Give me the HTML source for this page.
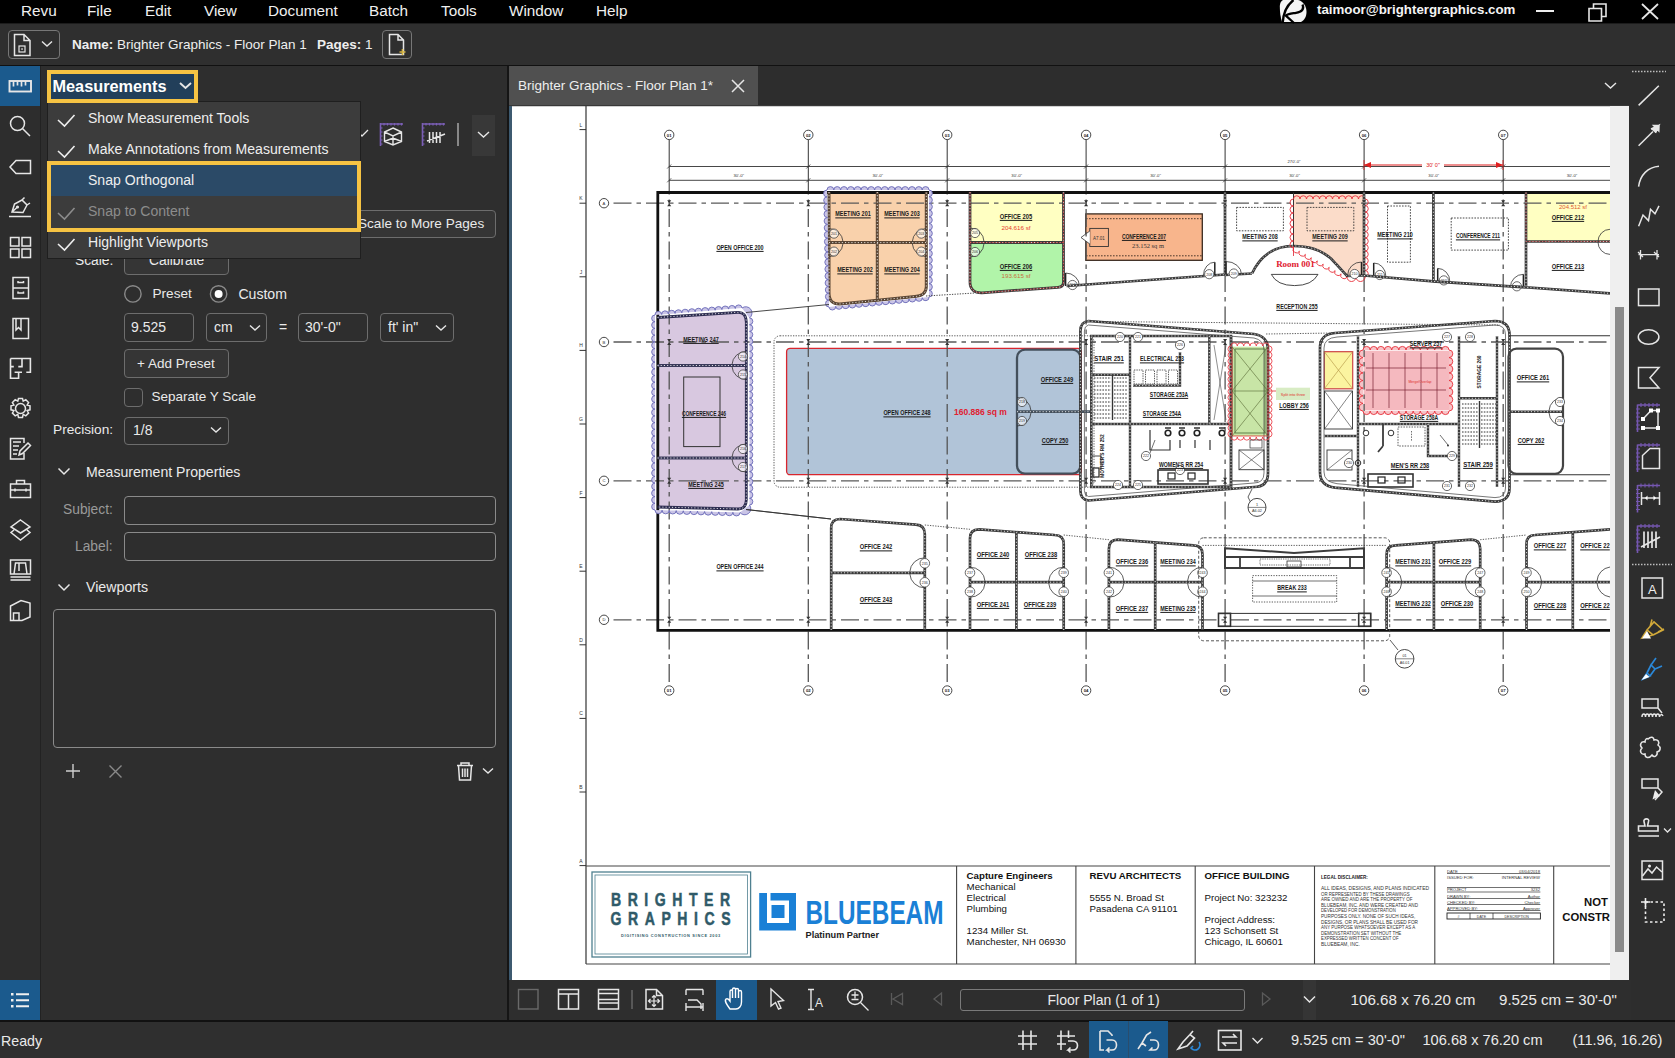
<!DOCTYPE html>
<html><head><meta charset="utf-8">
<style>
*{margin:0;padding:0;box-sizing:border-box}
html,body{width:1675px;height:1058px;overflow:hidden;background:#2b2b2b;font-family:"Liberation Sans",sans-serif;color:#e8e8e8}
.a{position:absolute}
.t{position:absolute;white-space:nowrap;line-height:1}
svg{position:absolute;overflow:visible}
.ic{fill:none;stroke:#e6e6e6;stroke-width:1.5}
</style></head><body>
<!-- menu bar -->
<div class="a" style="left:0;top:0;width:1675px;height:23px;background:#000"></div>
<div class="t" style="left:21px;top:3px;font-size:15.3px;color:#f0f0f0">Revu</div>
<div class="t" style="left:87px;top:3px;font-size:15.3px;color:#f0f0f0">File</div>
<div class="t" style="left:145px;top:3px;font-size:15.3px;color:#f0f0f0">Edit</div>
<div class="t" style="left:204px;top:3px;font-size:15.3px;color:#f0f0f0">View</div>
<div class="t" style="left:268px;top:3px;font-size:15.3px;color:#f0f0f0">Document</div>
<div class="t" style="left:369px;top:3px;font-size:15.3px;color:#f0f0f0">Batch</div>
<div class="t" style="left:441px;top:3px;font-size:15.3px;color:#f0f0f0">Tools</div>
<div class="t" style="left:509px;top:3px;font-size:15.3px;color:#f0f0f0">Window</div>
<div class="t" style="left:596px;top:3px;font-size:15.3px;color:#f0f0f0">Help</div>

<!-- toolbar row -->
<div class="a" style="left:0;top:23px;width:1675px;height:42px;background:#2f2f2f"></div><div class="a" style="left:0;top:23px;width:1675px;height:1px;background:#1c1c1c"></div>
<div class="a" style="left:0;top:65px;width:1675px;height:1px;background:#111"></div>
<!-- top right -->
<svg style="left:1275px;top:0" width="35" height="23" viewBox="1275 0 35 23">
<path d="M1283 0 H1298 C1303 1 1306.5 6 1306.5 12 C1306.5 17 1304 20.5 1301 22 H1282 C1280.5 17 1279.8 12 1279.8 6 C1280 3 1281 1 1283 0 Z" fill="#f4f4f4"/>
<path d="M1282.7 23 C1283 14 1286 6 1293.5 0" fill="none" stroke="#000" stroke-width="2.3"/>
<path d="M1302.5 4.5 C1304.5 9 1302 12 1296 12.8 C1291 13.5 1287.5 13.6 1285.8 15.6 L1294 23" fill="none" stroke="#000" stroke-width="2.3"/>
</svg>
<div class="t" style="left:1317px;top:3px;font-size:13.3px;font-weight:bold;color:#f4f4f4">taimoor@brightergraphics.com</div>
<div class="a" style="left:1536px;top:10px;width:18px;height:1.5px;background:#eee"></div>
<svg style="left:1588px;top:2px" width="20" height="20" viewBox="0 0 20 20"><path d="M1 6.5 H13.5 V19 H1 Z M5.5 6.5 V2 H18 V14.5 H13.5" class="ic" style="stroke-width:1.6"/></svg>
<svg style="left:1641px;top:3px" width="18" height="17" viewBox="0 0 18 17"><path d="M1 1 L17 16 M17 1 L1 16" class="ic" style="stroke-width:1.8"/></svg>

<!-- doc button -->
<div class="a" style="left:8px;top:30px;width:52px;height:29px;border:1.5px solid #777;border-radius:4px"></div>
<svg style="left:13px;top:33px" width="20" height="24" viewBox="0 0 20 24"><path d="M1.5 1.5 H11 L17 7.5 V22.5 H1.5 Z M11 1.5 V7.5 H17" class="ic"/><rect x="6" y="13" width="6" height="6" class="ic" style="stroke-width:1.2"/><rect x="8.3" y="15.3" width="1.5" height="1.5" fill="#e6e6e6"/></svg>
<svg style="left:41px;top:40px" width="12" height="8" viewBox="0 0 12 8"><path d="M1 1.5 L6 6 L11 1.5" class="ic" style="stroke-width:1.4"/></svg>
<div class="t" style="left:72px;top:38px;font-size:13.5px;color:#eee"><b>Name:</b> Brighter Graphics - Floor Plan 1</div>
<div class="t" style="left:317px;top:38px;font-size:13.5px;color:#eee"><b>Pages:</b> 1</div>
<div class="a" style="left:382px;top:30px;width:30px;height:29px;border:1.5px solid #777;border-radius:4px"></div>
<svg style="left:388px;top:33px" width="20" height="24" viewBox="0 0 20 24"><path d="M1.5 1.5 H10 L15.5 7 V21.5 H1.5 Z M10 1.5 V7 H15.5" class="ic"/><path d="M14.5 16 V22 M11.5 19 H17.5" stroke="#d4b340" stroke-width="1.6"/></svg>

<!-- left icon strip -->
<div class="a" style="left:0;top:66px;width:40px;height:954px;background:#2d2d2d"></div>
<div class="a" style="left:40px;top:66px;width:1px;height:954px;background:#222"></div>
<div class="a" style="left:0;top:66px;width:40px;height:40px;background:#1b5a8d"></div>
<div class="a" style="left:0;top:980px;width:40px;height:40px;background:#1b5a8d"></div>


<svg style="left:0;top:66px" width="40" height="560" viewBox="0 66 40 560">
<g class="ic">
<!-- ruler -->
<rect x="9.5" y="81" width="21.5" height="10.5" style="stroke-width:1.9"/><path d="M13.5 81 V86.5 M17.5 81 V85.5 M21.5 81 V86.5 M25.5 81 V85.5" style="stroke-width:1.7"/>
<!-- search -->
<circle cx="17.5" cy="123.5" r="7"/><path d="M22.5 128.5 L30 136"/>
<!-- tag -->
<path d="M10 167 L16 160.5 H30.5 V173.5 H16 Z"/>
<!-- pen -->
<path d="M9 216.5 H31 M12 212 L14.5 204 L22 200 L27 205 L23 212.5 Z M22 200 L24.5 197.5 M27 205 L30 203 M12 212 L17.5 207"/><circle cx="17.5" cy="207" r="0.8" fill="#e6e6e6"/>
<!-- grid -->
<rect x="10.5" y="237.5" width="8.5" height="8.5"/><rect x="22" y="237.5" width="8.5" height="8.5"/><rect x="10.5" y="249" width="8.5" height="8.5"/><rect x="22" y="249" width="8.5" height="8.5"/>
<!-- cabinet -->
<rect x="13" y="277.5" width="15.5" height="21"/><path d="M13 288 H28.5 M18 281 V282.5 H23.5 V281 M18 291.5 V293 H23.5 V291.5"/>
<!-- bookmark -->
<rect x="13" y="318.5" width="15.5" height="20"/><path d="M16 318.5 V330 L18.5 327.5 L21 330 V318.5"/>
<!-- floorplan -->
<path d="M10.5 358.5 H30.4 V372.3 H26.3 M10.5 358.5 V378.2 H18.6 V372.3 M14.6 372.3 H22 M22 358.5 V366.6 H18.3 M10.5 366.6 H13.8" style="stroke-width:1.6"/>
<!-- gear -->
<circle cx="20.5" cy="408.5" r="5"/>
<path d="M18.5 398.5 H22.5 L23.2 401.2 L25.8 399.7 L28.6 402.5 L27.1 405.1 L30 405.8 V409.8 L27.1 410.5 L28.6 413.1 L25.8 415.9 L23.2 414.4 L22.5 417.5 H18.5 L17.8 414.4 L15.2 415.9 L12.4 413.1 L13.9 410.5 L11 409.8 V405.8 L13.9 405.1 L12.4 402.5 L15.2 399.7 L17.8 401.2 Z"/>
<!-- form -->
<path d="M24 453 V459 H10.5 V438.5 H24 V443"/><path d="M13 442 H21 M13 446 H19 M13 450 H18 M13 454 H17"/><path d="M19 455 L20 451 L28 443 L30.5 445.5 L22.5 453.5 Z"/>
<!-- toolbox -->
<rect x="10.5" y="484" width="20" height="13.5"/><path d="M16.5 484 V480.5 H24.5 V484 M10.5 490 H30.5 M15 488.5 V491.5 M26 488.5 V491.5"/>
<!-- layers -->
<path d="M20.5 520 L30 527 L20.5 533 L11 527 Z M14 530 L11 532.5 L20.5 540 L30 532.5 L27 530"/>
<!-- scanner -->
<path d="M10.5 574 V560 H30.5 V574 Z M14 574 L15.5 563 H25.5 L27 574 M19 563 V571 M10.5 577 H30.5 M10.5 580 H30.5"/>
<!-- house -->
<path d="M10.5 606 L21 600.5 L30 603 V617 L22 620.5 H10.5 Z M13.5 620.5 V613 H19 V620.5"/>
</g>
</svg>
<svg style="left:0;top:980px" width="40" height="40" viewBox="0 0 40 40">
<g fill="#f0f0f0"><rect x="11" y="13" width="2.5" height="2.5"/><rect x="11" y="19" width="2.5" height="2.5"/><rect x="11" y="25" width="2.5" height="2.5"/></g>
<path d="M16 14.3 H29 M16 20.3 H29 M16 26.3 H29" stroke="#f0f0f0" stroke-width="2"/>
</svg>

<!-- left panel -->
<div class="a" style="left:41px;top:66px;width:466px;height:954px;background:#2e2e2e"></div>
<div class="a" style="left:507px;top:66px;width:2px;height:954px;background:#151515"></div>

<div class="a" style="left:472px;top:115px;width:23px;height:41px;background:#383838"></div>
<svg style="left:477px;top:131px" width="13" height="8" viewBox="0 0 13 8"><path d="M1 1 L6.5 6 L12 1" class="ic" style="stroke-width:1.4"/></svg>
<div class="a" style="left:457px;top:123px;width:2px;height:23px;background:#888"></div>
<svg style="left:358px;top:128px" width="12" height="10" viewBox="0 0 12 10"><path d="M1 5 L4 8 L10 2" class="ic" style="stroke-width:1.3"/></svg>
<svg style="left:379px;top:122px" width="26" height="25" viewBox="0 0 26 25">
<path d="M1.5 1 V24 M1.5 2 H24" stroke="#7b5fb5" stroke-width="1.6" fill="none"/>
<path d="M5 1 V3.5 M8.5 1 V3.5 M12 1 V3.5 M15.5 1 V3.5 M19 1 V3.5 M22.5 1 V3.5 M1 6 H3.5 M1 10 H3.5 M1 14 H3.5 M1 18 H3.5 M1 22 H3.5" stroke="#7b5fb5" stroke-width="1.2"/>
<path d="M14 6 L22.5 10 V19.5 L14 23 L5.5 19.5 V10 Z M5.5 10 L14 14 L22.5 10 M14 14 V23 M5.5 19.5 L14 16 L22.5 19.5" class="ic" style="stroke-width:1.4"/>
</svg>
<svg style="left:421px;top:122px" width="26" height="25" viewBox="0 0 26 25">
<path d="M1.5 1 V24 M1.5 2 H24" stroke="#7b5fb5" stroke-width="1.6" fill="none"/>
<path d="M5 1 V3.5 M8.5 1 V3.5 M12 1 V3.5 M15.5 1 V3.5 M19 1 V3.5 M22.5 1 V3.5 M1 6 H3.5 M1 10 H3.5 M1 14 H3.5 M1 18 H3.5 M1 22 H3.5" stroke="#7b5fb5" stroke-width="1.2"/>
<path d="M8.5 10 V21 M12 10 V21 M15.5 10 V21 M19 10 V21 M6 19 L24 12" class="ic" style="stroke-width:1.5"/>
</svg>
<div class="a" style="left:300px;top:210px;width:196px;height:28px;border:1.3px solid #6d6d6d;border-radius:4px;background:#353535"></div>
<div class="t" style="left:358px;top:217.0px;font-size:13.6px;color:#eaeaea;">Scale to More Pages</div>
<div class="t" style="left:75px;top:253.9px;font-size:13.8px;color:#eaeaea;">Scale:</div>
<div class="a" style="left:124px;top:246px;width:105px;height:29px;border:1.3px solid #6d6d6d;border-radius:4px;background:#353535"></div>
<div class="t" style="left:149px;top:253.9px;font-size:13.8px;color:#eaeaea;">Calibrate</div>
<svg style="left:120px;top:281px" width="110" height="26" viewBox="120 281 110 26"><circle cx="132.9" cy="293.9" r="8.2" fill="none" stroke="#8a8a8a" stroke-width="1.4"/><circle cx="218.6" cy="293.9" r="8.2" fill="none" stroke="#8a8a8a" stroke-width="1.4"/><circle cx="218.6" cy="293.9" r="4" fill="#fff"/></svg>
<div class="t" style="left:152.5px;top:286.9px;font-size:13.6px;color:#eaeaea;">Preset</div>
<div class="t" style="left:238.4px;top:286.5px;font-size:14.1px;color:#eaeaea;">Custom</div>
<div class="a" style="left:124px;top:313px;width:70px;height:29px;border:1.3px solid #6d6d6d;border-radius:4px;background:#2e2e2e"></div>
<div class="t" style="left:131px;top:320.1px;font-size:14px;color:#eaeaea;">9.525</div>
<div class="a" style="left:206px;top:313px;width:61px;height:29px;border:1.3px solid #6d6d6d;border-radius:4px;background:#2e2e2e"></div>
<div class="t" style="left:214px;top:320.1px;font-size:14px;color:#eaeaea;">cm</div>
<svg style="left:249px;top:324px" width="12" height="8" viewBox="0 0 12 8"><path d="M1 1.5 L6 6 L11 1.5" class="ic" style="stroke-width:1.4"/></svg>
<div class="t" style="left:279px;top:320.1px;font-size:14px;color:#eaeaea;">=</div>
<div class="a" style="left:298px;top:313px;width:70px;height:29px;border:1.3px solid #6d6d6d;border-radius:4px;background:#2e2e2e"></div>
<div class="t" style="left:305px;top:320.1px;font-size:14px;color:#eaeaea;">30'-0"</div>
<div class="a" style="left:380px;top:313px;width:74px;height:29px;border:1.3px solid #6d6d6d;border-radius:4px;background:#2e2e2e"></div>
<div class="t" style="left:388px;top:320.1px;font-size:14px;color:#eaeaea;">ft' in"</div>
<svg style="left:435px;top:324px" width="12" height="8" viewBox="0 0 12 8"><path d="M1 1.5 L6 6 L11 1.5" class="ic" style="stroke-width:1.4"/></svg>
<div class="a" style="left:124px;top:349px;width:105px;height:29px;border:1.3px solid #6d6d6d;border-radius:4px;background:#353535"></div>
<div class="t" style="left:137px;top:356.6px;font-size:13.5px;color:#eaeaea;">+ Add Preset</div>
<div class="a" style="left:124px;top:388px;width:19px;height:19px;border:1.3px solid #6d6d6d;border-radius:4px;background:#2e2e2e"></div>
<div class="t" style="left:151.5px;top:390.1px;font-size:13.5px;color:#eaeaea;">Separate Y Scale</div>
<div class="t" style="left:53px;top:423.4px;font-size:13.7px;color:#eaeaea;">Precision:</div>
<div class="a" style="left:124px;top:417px;width:105px;height:28px;border:1.3px solid #6d6d6d;border-radius:4px;background:#2e2e2e"></div>
<div class="t" style="left:133px;top:423.1px;font-size:14px;color:#eaeaea;">1/8</div>
<svg style="left:210px;top:426px" width="12" height="8" viewBox="0 0 12 8"><path d="M1 1.5 L6 6 L11 1.5" class="ic" style="stroke-width:1.4"/></svg>
<svg style="left:57px;top:467px" width="14" height="9" viewBox="0 0 14 9"><path d="M1.5 1.5 L7 7 L12.5 1.5" class="ic" style="stroke-width:1.5"/></svg>
<div class="t" style="left:86px;top:464.6px;font-size:14.1px;color:#eaeaea;">Measurement Properties</div>
<div class="t" style="left:63px;top:503.3px;font-size:13.8px;color:#9a9a9a;">Subject:</div>
<div class="a" style="left:124px;top:496px;width:372px;height:29px;border:1.3px solid #8a8a8a;border-radius:4px;background:#2e2e2e"></div>
<div class="t" style="left:75px;top:539.8px;font-size:13.8px;color:#9a9a9a;">Label:</div>
<div class="a" style="left:124px;top:532px;width:372px;height:29px;border:1.3px solid #8a8a8a;border-radius:4px;background:#2e2e2e"></div>
<svg style="left:57px;top:583px" width="14" height="9" viewBox="0 0 14 9"><path d="M1.5 1.5 L7 7 L12.5 1.5" class="ic" style="stroke-width:1.5"/></svg>
<div class="t" style="left:86px;top:580.0px;font-size:14.2px;color:#eaeaea;">Viewports</div>
<div class="a" style="left:53px;top:609px;width:443px;height:139px;border:1.3px solid #8a8a8a;border-radius:4px;background:#2e2e2e"></div>
<svg style="left:60px;top:760px" width="440" height="24" viewBox="60 760 440 24"><path d="M73 764 V778 M66 771 H80" stroke="#cfcfcf" stroke-width="1.4"/><path d="M109.5 765.5 L121.5 777.5 M121.5 765.5 L109.5 777.5" stroke="#8a8a8a" stroke-width="1.4"/><path d="M457 765.5 H473 M461 765.5 V763 H469 V765.5 M458.5 765.5 L459.5 780 H470.5 L471.5 765.5 M462.5 768.5 V777 M465 768.5 V777 M467.5 768.5 V777" class="ic" style="stroke-width:1.5"/><path d="M483 768.5 L488 773 L493 768.5" class="ic" style="stroke-width:1.4"/></svg>
<div class="a" style="left:47px;top:101px;width:314px;height:158px;background:#3c3c3c;border:1px solid #1f1f1f"></div>
<div class="a" style="left:47px;top:161px;width:314px;height:71px;border:4px solid #f6c343"></div>
<div class="a" style="left:51px;top:165px;width:306px;height:31px;background:#2b4a67"></div>
<div class="t" style="left:88px;top:110.7px;font-size:14.05px;color:#eee;">Show Measurement Tools</div>
<svg style="left:56px;top:113.6px" width="20" height="14" viewBox="0 0 20 14"><path d="M2 6 L8.5 12 L18.5 1" fill="none" stroke="#eee" stroke-width="1.6"/></svg>
<div class="t" style="left:88px;top:141.7px;font-size:14.05px;color:#eee;">Make Annotations from Measurements</div>
<svg style="left:56px;top:144.6px" width="20" height="14" viewBox="0 0 20 14"><path d="M2 6 L8.5 12 L18.5 1" fill="none" stroke="#eee" stroke-width="1.6"/></svg>
<div class="t" style="left:88px;top:172.7px;font-size:14.05px;color:#eee;">Snap Orthogonal</div>
<div class="t" style="left:88px;top:203.7px;font-size:14.05px;color:#8c8c8c;">Snap to Content</div>
<svg style="left:56px;top:206.6px" width="20" height="14" viewBox="0 0 20 14"><path d="M2 6 L8.5 12 L18.5 1" fill="none" stroke="#8c8c8c" stroke-width="1.6"/></svg>
<div class="t" style="left:88px;top:234.7px;font-size:14.05px;color:#eee;">Highlight Viewports</div>
<svg style="left:56px;top:237.6px" width="20" height="14" viewBox="0 0 20 14"><path d="M2 6 L8.5 12 L18.5 1" fill="none" stroke="#eee" stroke-width="1.6"/></svg>
<div class="a" style="left:47px;top:70px;width:151px;height:33px;border:4px solid #f6c343;background:#223f5a"></div>
<div class="t" style="left:52.5px;top:77.7px;font-size:16.3px;color:#fff;font-weight:bold">Measurements</div>
<svg style="left:179px;top:82px" width="13" height="8" viewBox="0 0 13 8"><path d="M1 1 L6.5 6 L12 1" class="ic" style="stroke-width:1.9"/></svg>

<!-- tab bar / doc area -->
<div class="a" style="left:509px;top:66px;width:1122px;height:40px;background:#2d2d2d"></div>
<div class="a" style="left:509px;top:66px;width:249px;height:40px;background:#505050"></div>
<div class="a" style="left:509px;top:105px;width:1120px;height:1px;background:#383838"></div>
<div class="t" style="left:518px;top:79px;font-size:13.5px;color:#eee">Brighter Graphics - Floor Plan 1*</div>
<svg style="left:731px;top:79px" width="14" height="14" viewBox="0 0 14 14"><path d="M1 1 L13 13 M13 1 L1 13" class="ic" style="stroke-width:1.5"/></svg>
<svg style="left:1604px;top:82px" width="13" height="8" viewBox="0 0 13 8"><path d="M1 1 L6.5 6 L12 1" class="ic" style="stroke-width:1.4"/></svg>
<div class="a" style="left:509px;top:106px;width:3px;height:874px;background:#3d5a70"></div>
<div class="a" id="page" style="left:512px;top:106px;width:1098px;height:874px;background:#fff;overflow:hidden"></div>
<!--PLAN--><svg style="left:512px;top:106px" width="1098" height="874" viewBox="512 106 1098 874"><defs><clipPath id="pc"><rect x="512" y="106" width="1098" height="874"/></clipPath></defs><g clip-path="url(#pc)">
<path d="M512 106.5 H1610" stroke="#d0d0d0" stroke-width="1"/>
<path d="M586 106 V964" stroke="#333" stroke-width="1.2"/>
<path d="M579.5 129.6 H586" stroke="#333" stroke-width="1"/>
<text x="581" y="126.6" font-family="Liberation Sans" font-size="5" fill="#333" text-anchor="middle">L</text>
<path d="M579.5 203.2 H586" stroke="#333" stroke-width="1"/>
<text x="581" y="200.2" font-family="Liberation Sans" font-size="5" fill="#333" text-anchor="middle">K</text>
<path d="M579.5 276.8 H586" stroke="#333" stroke-width="1"/>
<text x="581" y="273.8" font-family="Liberation Sans" font-size="5" fill="#333" text-anchor="middle">J</text>
<path d="M579.5 350.4 H586" stroke="#333" stroke-width="1"/>
<text x="581" y="347.4" font-family="Liberation Sans" font-size="5" fill="#333" text-anchor="middle">H</text>
<path d="M579.5 424.0 H586" stroke="#333" stroke-width="1"/>
<text x="581" y="421.0" font-family="Liberation Sans" font-size="5" fill="#333" text-anchor="middle">G</text>
<path d="M579.5 497.6 H586" stroke="#333" stroke-width="1"/>
<text x="581" y="494.6" font-family="Liberation Sans" font-size="5" fill="#333" text-anchor="middle">F</text>
<path d="M579.5 571.2 H586" stroke="#333" stroke-width="1"/>
<text x="581" y="568.2" font-family="Liberation Sans" font-size="5" fill="#333" text-anchor="middle">E</text>
<path d="M579.5 644.8 H586" stroke="#333" stroke-width="1"/>
<text x="581" y="641.8" font-family="Liberation Sans" font-size="5" fill="#333" text-anchor="middle">D</text>
<path d="M579.5 718.4 H586" stroke="#333" stroke-width="1"/>
<text x="581" y="715.4" font-family="Liberation Sans" font-size="5" fill="#333" text-anchor="middle">C</text>
<path d="M579.5 792.0 H586" stroke="#333" stroke-width="1"/>
<text x="581" y="789.0" font-family="Liberation Sans" font-size="5" fill="#333" text-anchor="middle">B</text>
<path d="M579.5 865.6 H586" stroke="#333" stroke-width="1"/>
<text x="581" y="862.6" font-family="Liberation Sans" font-size="5" fill="#333" text-anchor="middle">A</text>
<path d="M657.5 317.5 L738 312.3 Q746 312 746.3 322 L746.3 500 Q746 509 738 509 L657.5 507 Z" fill="#d8c8e0"/>
<path d="M829 191.5 H926.3 V287 Q926 295.7 915 296.5 L840 304 Q829 304.5 829 293 Z" fill="#f9d1ab"/>
<rect x="970" y="192.5" width="93.5" height="50" fill="#ffffc2"/>
<path d="M970 242.5 H1063.5 V282 Q1063.5 287 1058 287.3 L982 292.8 Q970 293 970 282 Z" fill="#b1f4a9"/>
<rect x="1085.8" y="213.9" width="116.5" height="46.4" fill="#f8b58c" stroke="#3a2a20" stroke-width="1.3"/>
<path d="M1086 218.7 H1202 M1086 255.8 H1202" stroke="#3a2a20" stroke-width="0.9" stroke-dasharray="1.6 1.4"/>
<rect x="1089.8" y="228.4" width="18.6" height="18.1" fill="none" stroke="#333" stroke-width="0.9"/>
<path d="M1089.8 231 L1081 237.5 L1089.8 244" fill="#fff" stroke="#333" stroke-width="0.8"/>
<text x="1099" y="239.5" font-family="Liberation Sans" font-size="4.5" fill="#333" text-anchor="middle">A7.01</text>
<path d="M1293.5 192.5 H1364 V276 L1347 276 Q1343 268 1336 263 Q1315 246 1293.5 246 Z" fill="#fbdcc9"/>
<rect x="1526" y="192.5" width="84" height="49" fill="#ffffc2"/>
<rect x="786.6" y="348.3" width="294.7" height="126.4" rx="3.5" fill="#b1c4d8" stroke="#d8262e" stroke-width="1.3"/>
<rect x="1017" y="349.7" width="63.4" height="124" rx="8" fill="#b1c4d8" stroke="#44505c" stroke-width="2.3"/>
<rect x="1232" y="346.7" width="36" height="89.3" fill="#c8e5a6"/>
<rect x="1324.3" y="351.7" width="28.4" height="37.1" fill="#fbf4a0" stroke="#c44" stroke-width="1.2"/>
<rect x="1363.6" y="350.7" width="85.4" height="59.6" fill="#f5b9bf"/>
<rect x="1276" y="387.7" width="34" height="12.3" fill="#d8ecc4"/>
<path d="M669.2 139.6 V192" stroke="#333" stroke-width="1"/>
<path d="M669.2 192 V685.8" stroke="#555" stroke-width="1.3" stroke-dasharray="18 5 4.5 5" stroke-dashoffset="15.4"/>
<circle cx="669.2" cy="134.9" r="4.7" fill="#fff" stroke="#333" stroke-width="0.9"/>
<circle cx="669.2" cy="690.5" r="4.7" fill="#fff" stroke="#333" stroke-width="0.9"/>
<text x="669.2" y="136.6" font-family="Liberation Sans" font-size="4.3" font-weight="bold" fill="#222" text-anchor="middle">01</text>
<text x="669.2" y="692.2" font-family="Liberation Sans" font-size="4.3" font-weight="bold" fill="#222" text-anchor="middle">01</text>
<path d="M667.2 200.2 H671.2 L669.2 203.2 L671.2 206.2 H667.2 L669.2 203.2 Z" fill="#333"/>
<path d="M667.2 339.0 H671.2 L669.2 342.0 L671.2 345.0 H667.2 L669.2 342.0 Z" fill="#333"/>
<path d="M667.2 477.8 H671.2 L669.2 480.8 L671.2 483.8 H667.2 L669.2 480.8 Z" fill="#333"/>
<path d="M667.2 616.8 H671.2 L669.2 619.8 L671.2 622.8 H667.2 L669.2 619.8 Z" fill="#333"/>
<path d="M808.3 139.6 V192" stroke="#333" stroke-width="1"/>
<path d="M808.3 192 V685.8" stroke="#555" stroke-width="1.3" stroke-dasharray="18 5 4.5 5" stroke-dashoffset="15.4"/>
<circle cx="808.3" cy="134.9" r="4.7" fill="#fff" stroke="#333" stroke-width="0.9"/>
<circle cx="808.3" cy="690.5" r="4.7" fill="#fff" stroke="#333" stroke-width="0.9"/>
<text x="808.3" y="136.6" font-family="Liberation Sans" font-size="4.3" font-weight="bold" fill="#222" text-anchor="middle">02</text>
<text x="808.3" y="692.2" font-family="Liberation Sans" font-size="4.3" font-weight="bold" fill="#222" text-anchor="middle">02</text>
<path d="M806.3 200.2 H810.3 L808.3 203.2 L810.3 206.2 H806.3 L808.3 203.2 Z" fill="#333"/>
<path d="M806.3 339.0 H810.3 L808.3 342.0 L810.3 345.0 H806.3 L808.3 342.0 Z" fill="#333"/>
<path d="M806.3 477.8 H810.3 L808.3 480.8 L810.3 483.8 H806.3 L808.3 480.8 Z" fill="#333"/>
<path d="M806.3 616.8 H810.3 L808.3 619.8 L810.3 622.8 H806.3 L808.3 619.8 Z" fill="#333"/>
<path d="M947.2 139.6 V192" stroke="#333" stroke-width="1"/>
<path d="M947.2 192 V685.8" stroke="#555" stroke-width="1.3" stroke-dasharray="18 5 4.5 5" stroke-dashoffset="15.4"/>
<circle cx="947.2" cy="134.9" r="4.7" fill="#fff" stroke="#333" stroke-width="0.9"/>
<circle cx="947.2" cy="690.5" r="4.7" fill="#fff" stroke="#333" stroke-width="0.9"/>
<text x="947.2" y="136.6" font-family="Liberation Sans" font-size="4.3" font-weight="bold" fill="#222" text-anchor="middle">03</text>
<text x="947.2" y="692.2" font-family="Liberation Sans" font-size="4.3" font-weight="bold" fill="#222" text-anchor="middle">03</text>
<path d="M945.2 200.2 H949.2 L947.2 203.2 L949.2 206.2 H945.2 L947.2 203.2 Z" fill="#333"/>
<path d="M945.2 339.0 H949.2 L947.2 342.0 L949.2 345.0 H945.2 L947.2 342.0 Z" fill="#333"/>
<path d="M945.2 477.8 H949.2 L947.2 480.8 L949.2 483.8 H945.2 L947.2 480.8 Z" fill="#333"/>
<path d="M945.2 616.8 H949.2 L947.2 619.8 L949.2 622.8 H945.2 L947.2 619.8 Z" fill="#333"/>
<path d="M1086.1 139.6 V192" stroke="#333" stroke-width="1"/>
<path d="M1086.1 192 V685.8" stroke="#555" stroke-width="1.3" stroke-dasharray="18 5 4.5 5" stroke-dashoffset="15.4"/>
<circle cx="1086.1" cy="134.9" r="4.7" fill="#fff" stroke="#333" stroke-width="0.9"/>
<circle cx="1086.1" cy="690.5" r="4.7" fill="#fff" stroke="#333" stroke-width="0.9"/>
<text x="1086.1" y="136.6" font-family="Liberation Sans" font-size="4.3" font-weight="bold" fill="#222" text-anchor="middle">04</text>
<text x="1086.1" y="692.2" font-family="Liberation Sans" font-size="4.3" font-weight="bold" fill="#222" text-anchor="middle">04</text>
<path d="M1084.1 200.2 H1088.1 L1086.1 203.2 L1088.1 206.2 H1084.1 L1086.1 203.2 Z" fill="#333"/>
<path d="M1084.1 339.0 H1088.1 L1086.1 342.0 L1088.1 345.0 H1084.1 L1086.1 342.0 Z" fill="#333"/>
<path d="M1084.1 477.8 H1088.1 L1086.1 480.8 L1088.1 483.8 H1084.1 L1086.1 480.8 Z" fill="#333"/>
<path d="M1084.1 616.8 H1088.1 L1086.1 619.8 L1088.1 622.8 H1084.1 L1086.1 619.8 Z" fill="#333"/>
<path d="M1225.1 139.6 V192" stroke="#333" stroke-width="1"/>
<path d="M1225.1 192 V685.8" stroke="#555" stroke-width="1.3" stroke-dasharray="18 5 4.5 5" stroke-dashoffset="15.4"/>
<circle cx="1225.1" cy="134.9" r="4.7" fill="#fff" stroke="#333" stroke-width="0.9"/>
<circle cx="1225.1" cy="690.5" r="4.7" fill="#fff" stroke="#333" stroke-width="0.9"/>
<text x="1225.1" y="136.6" font-family="Liberation Sans" font-size="4.3" font-weight="bold" fill="#222" text-anchor="middle">05</text>
<text x="1225.1" y="692.2" font-family="Liberation Sans" font-size="4.3" font-weight="bold" fill="#222" text-anchor="middle">05</text>
<path d="M1223.1 200.2 H1227.1 L1225.1 203.2 L1227.1 206.2 H1223.1 L1225.1 203.2 Z" fill="#333"/>
<path d="M1223.1 339.0 H1227.1 L1225.1 342.0 L1227.1 345.0 H1223.1 L1225.1 342.0 Z" fill="#333"/>
<path d="M1223.1 477.8 H1227.1 L1225.1 480.8 L1227.1 483.8 H1223.1 L1225.1 480.8 Z" fill="#333"/>
<path d="M1223.1 616.8 H1227.1 L1225.1 619.8 L1227.1 622.8 H1223.1 L1225.1 619.8 Z" fill="#333"/>
<path d="M1364.1 139.6 V192" stroke="#333" stroke-width="1"/>
<path d="M1364.1 192 V685.8" stroke="#555" stroke-width="1.3" stroke-dasharray="18 5 4.5 5" stroke-dashoffset="15.4"/>
<circle cx="1364.1" cy="134.9" r="4.7" fill="#fff" stroke="#333" stroke-width="0.9"/>
<circle cx="1364.1" cy="690.5" r="4.7" fill="#fff" stroke="#333" stroke-width="0.9"/>
<text x="1364.1" y="136.6" font-family="Liberation Sans" font-size="4.3" font-weight="bold" fill="#222" text-anchor="middle">06</text>
<text x="1364.1" y="692.2" font-family="Liberation Sans" font-size="4.3" font-weight="bold" fill="#222" text-anchor="middle">06</text>
<path d="M1362.1 200.2 H1366.1 L1364.1 203.2 L1366.1 206.2 H1362.1 L1364.1 203.2 Z" fill="#333"/>
<path d="M1362.1 339.0 H1366.1 L1364.1 342.0 L1366.1 345.0 H1362.1 L1364.1 342.0 Z" fill="#333"/>
<path d="M1362.1 477.8 H1366.1 L1364.1 480.8 L1366.1 483.8 H1362.1 L1364.1 480.8 Z" fill="#333"/>
<path d="M1362.1 616.8 H1366.1 L1364.1 619.8 L1366.1 622.8 H1362.1 L1364.1 619.8 Z" fill="#333"/>
<path d="M1503.2 139.6 V192" stroke="#333" stroke-width="1"/>
<path d="M1503.2 192 V685.8" stroke="#555" stroke-width="1.3" stroke-dasharray="18 5 4.5 5" stroke-dashoffset="15.4"/>
<circle cx="1503.2" cy="134.9" r="4.7" fill="#fff" stroke="#333" stroke-width="0.9"/>
<circle cx="1503.2" cy="690.5" r="4.7" fill="#fff" stroke="#333" stroke-width="0.9"/>
<text x="1503.2" y="136.6" font-family="Liberation Sans" font-size="4.3" font-weight="bold" fill="#222" text-anchor="middle">07</text>
<text x="1503.2" y="692.2" font-family="Liberation Sans" font-size="4.3" font-weight="bold" fill="#222" text-anchor="middle">07</text>
<path d="M1501.2 200.2 H1505.2 L1503.2 203.2 L1505.2 206.2 H1501.2 L1503.2 203.2 Z" fill="#333"/>
<path d="M1501.2 339.0 H1505.2 L1503.2 342.0 L1505.2 345.0 H1501.2 L1503.2 342.0 Z" fill="#333"/>
<path d="M1501.2 477.8 H1505.2 L1503.2 480.8 L1505.2 483.8 H1501.2 L1503.2 480.8 Z" fill="#333"/>
<path d="M1501.2 616.8 H1505.2 L1503.2 619.8 L1505.2 622.8 H1501.2 L1503.2 619.8 Z" fill="#333"/>
<circle cx="604" cy="203.2" r="4.7" fill="#fff" stroke="#333" stroke-width="0.9"/>
<text x="604" y="204.79999999999998" font-family="Liberation Sans" font-size="4.2" fill="#333" text-anchor="middle">A</text>
<path d="M608.7 203.2 H1610" stroke="#5a5a5a" stroke-width="1.3" stroke-dasharray="18 5 4.5 5" stroke-dashoffset="27.7"/>
<circle cx="604" cy="342.0" r="4.7" fill="#fff" stroke="#333" stroke-width="0.9"/>
<text x="604" y="343.6" font-family="Liberation Sans" font-size="4.2" fill="#333" text-anchor="middle">B</text>
<path d="M608.7 342.0 H1610" stroke="#5a5a5a" stroke-width="1.3" stroke-dasharray="18 5 4.5 5" stroke-dashoffset="27.7"/>
<circle cx="604" cy="480.8" r="4.7" fill="#fff" stroke="#333" stroke-width="0.9"/>
<text x="604" y="482.40000000000003" font-family="Liberation Sans" font-size="4.2" fill="#333" text-anchor="middle">C</text>
<path d="M608.7 480.8 H1610" stroke="#5a5a5a" stroke-width="1.3" stroke-dasharray="18 5 4.5 5" stroke-dashoffset="27.7"/>
<circle cx="604" cy="619.8" r="4.7" fill="#fff" stroke="#333" stroke-width="0.9"/>
<text x="604" y="621.4" font-family="Liberation Sans" font-size="4.2" fill="#333" text-anchor="middle">D</text>
<path d="M608.7 619.8 H1610" stroke="#5a5a5a" stroke-width="1.3" stroke-dasharray="18 5 4.5 5" stroke-dashoffset="27.7"/>
<path d="M669.2 166.5 H1610 M669.2 180.3 H1610" stroke="#333" stroke-width="0.9"/>
<path d="M667.2 182.3 L671.2 178.3 M667.2 168.5 L671.2 164.5" stroke="#333" stroke-width="0.8"/>
<path d="M806.3 182.3 L810.3 178.3 M806.3 168.5 L810.3 164.5" stroke="#333" stroke-width="0.8"/>
<path d="M945.2 182.3 L949.2 178.3 M945.2 168.5 L949.2 164.5" stroke="#333" stroke-width="0.8"/>
<path d="M1084.1 182.3 L1088.1 178.3 M1084.1 168.5 L1088.1 164.5" stroke="#333" stroke-width="0.8"/>
<path d="M1223.1 182.3 L1227.1 178.3 M1223.1 168.5 L1227.1 164.5" stroke="#333" stroke-width="0.8"/>
<path d="M1362.1 182.3 L1366.1 178.3 M1362.1 168.5 L1366.1 164.5" stroke="#333" stroke-width="0.8"/>
<path d="M1501.2 182.3 L1505.2 178.3 M1501.2 168.5 L1505.2 164.5" stroke="#333" stroke-width="0.8"/>
<text x="738.75" y="177" font-family="Liberation Sans" font-size="4.2" fill="#333" text-anchor="middle">30'-0"</text>
<text x="877.75" y="177" font-family="Liberation Sans" font-size="4.2" fill="#333" text-anchor="middle">30'-0"</text>
<text x="1016.65" y="177" font-family="Liberation Sans" font-size="4.2" fill="#333" text-anchor="middle">30'-0"</text>
<text x="1155.6" y="177" font-family="Liberation Sans" font-size="4.2" fill="#333" text-anchor="middle">30'-0"</text>
<text x="1294.6" y="177" font-family="Liberation Sans" font-size="4.2" fill="#333" text-anchor="middle">30'-0"</text>
<text x="1433.65" y="177" font-family="Liberation Sans" font-size="4.2" fill="#333" text-anchor="middle">30'-0"</text>
<text x="1294" y="163" font-family="Liberation Sans" font-size="4.2" fill="#333" text-anchor="middle">270'-0"</text>
<text x="1572" y="177" font-family="Liberation Sans" font-size="4.2" fill="#333" text-anchor="middle">30'-0"</text>
<path d="M1364 165 H1503" stroke="#e02020" stroke-width="1.2"/><path d="M1364 165 L1371 162 V168 Z M1503 165 L1496 162 V168 Z" fill="#e02020"/>
<rect x="1422" y="160.5" width="22" height="7" fill="#fff"/><text x="1433" y="166.5" font-family="Liberation Sans" font-size="5.5" fill="#e02020" text-anchor="middle">30' 0"</text>
<path d="M1364 160 V170 M1503 160 V170" stroke="#e02020" stroke-width="0.8"/>
<path d="M1610 192.5 H657.8 V630.4 H1610" fill="none" stroke="#111" stroke-width="2.8"/>
<path d="M829 192 V293 Q829 304.5 840 304 L915 296.5 Q926 295.7 926.3 287 V192" fill="none" stroke="#5b4634" stroke-width="3.0"/>
<path d="M829 192 V293 Q829 304.5 840 304 L915 296.5 Q926 295.7 926.3 287 V192" fill="none" stroke="#f4f4f4" stroke-width="0.9" stroke-dasharray="1.1 2.1"/>
<path d="M877.3 192 V300 M829 242.6 H926.3" fill="none" stroke="#5b4634" stroke-width="3.0"/>
<path d="M877.3 192 V300 M829 242.6 H926.3" fill="none" stroke="#f4f4f4" stroke-width="0.9" stroke-dasharray="1.1 2.1"/>
<path d="M829 228.6 A14 14 0 0 1 843 241.6 M829 256.6 A14 14 0 0 0 843 243.6" fill="none" stroke="#333" stroke-width="0.8"/>
<circle cx="834" cy="233.6" r="4.6" fill="#fff" fill-opacity="0.6" stroke="#444" stroke-width="0.8"/><circle cx="834" cy="251.6" r="4.6" fill="#fff" fill-opacity="0.6" stroke="#444" stroke-width="0.8"/>
<text x="834" y="234.9" font-family="Liberation Sans" font-size="3.6" fill="#333" text-anchor="middle">201</text>
<text x="834" y="252.9" font-family="Liberation Sans" font-size="3.6" fill="#333" text-anchor="middle">202</text>
<path d="M926.3 228.6 A14 14 0 0 0 912.3 241.6 M926.3 256.6 A14 14 0 0 1 912.3 243.6" fill="none" stroke="#333" stroke-width="0.8"/>
<circle cx="921.3" cy="233.6" r="4.6" fill="#fff" fill-opacity="0.6" stroke="#444" stroke-width="0.8"/><circle cx="921.3" cy="251.6" r="4.6" fill="#fff" fill-opacity="0.6" stroke="#444" stroke-width="0.8"/>
<text x="921.3" y="234.9" font-family="Liberation Sans" font-size="3.6" fill="#333" text-anchor="middle">203</text>
<text x="921.3" y="252.9" font-family="Liberation Sans" font-size="3.6" fill="#333" text-anchor="middle">204</text>
<path d="M827.0 190.0 A3.3 3.3 0 0 1 833.8 190.0 M833.8 190.0 A3.3 3.3 0 0 1 840.6 190.0 M840.6 190.0 A3.3 3.3 0 0 1 847.4 190.0 M847.4 190.0 A3.3 3.3 0 0 1 854.2 190.0 M854.2 190.0 A3.3 3.3 0 0 1 861.0 190.0 M861.0 190.0 A3.3 3.3 0 0 1 867.8 190.0 M867.8 190.0 A3.3 3.3 0 0 1 874.6 190.0 M874.6 190.0 A3.3 3.3 0 0 1 881.4 190.0 M881.4 190.0 A3.3 3.3 0 0 1 888.2 190.0 M888.2 190.0 A3.3 3.3 0 0 1 895.0 190.0 M895.0 190.0 A3.3 3.3 0 0 1 901.8 190.0 M901.8 190.0 A3.3 3.3 0 0 1 908.6 190.0 M908.6 190.0 A3.3 3.3 0 0 1 915.4 190.0 M915.4 190.0 A3.3 3.3 0 0 1 922.2 190.0 M922.2 190.0 A3.3 3.3 0 0 1 929.0 190.0 M929.0 190.0 A3.3 3.3 0 0 1 929.0 196.7 M929.0 196.7 A3.3 3.3 0 0 1 929.0 203.4 M929.0 203.4 A3.3 3.3 0 0 1 929.0 210.1 M929.0 210.1 A3.3 3.3 0 0 1 929.0 216.8 M929.0 216.8 A3.3 3.3 0 0 1 929.0 223.4 M929.0 223.4 A3.3 3.3 0 0 1 929.0 230.1 M929.0 230.1 A3.3 3.3 0 0 1 929.0 236.8 M929.0 236.8 A3.3 3.3 0 0 1 929.0 243.5 M929.0 243.5 A3.3 3.3 0 0 1 929.0 250.2 M929.0 250.2 A3.3 3.3 0 0 1 929.0 256.9 M929.0 256.9 A3.3 3.3 0 0 1 929.0 263.6 M929.0 263.6 A3.3 3.3 0 0 1 929.0 270.2 M929.0 270.2 A3.3 3.3 0 0 1 929.0 276.9 M929.0 276.9 A3.3 3.3 0 0 1 929.0 283.6 M929.0 283.6 A3.3 3.3 0 0 1 929.0 290.3 M929.0 290.3 A3.3 3.3 0 0 1 929.0 297.0 M929.0 297.0 A3.3 3.3 0 0 1 922.3 297.7 M922.3 297.7 A3.3 3.3 0 0 1 915.7 298.3 M915.7 298.3 A3.3 3.3 0 0 1 909.0 299.0 M909.0 299.0 A3.3 3.3 0 0 1 902.3 299.7 M902.3 299.7 A3.3 3.3 0 0 1 895.7 300.3 M895.7 300.3 A3.3 3.3 0 0 1 889.0 301.0 M889.0 301.0 A3.3 3.3 0 0 1 882.3 301.7 M882.3 301.7 A3.3 3.3 0 0 1 875.7 302.3 M875.7 302.3 A3.3 3.3 0 0 1 869.0 303.0 M869.0 303.0 A3.3 3.3 0 0 1 862.3 303.7 M862.3 303.7 A3.3 3.3 0 0 1 855.7 304.3 M855.7 304.3 A3.3 3.3 0 0 1 849.0 305.0 M849.0 305.0 A3.3 3.3 0 0 1 842.3 305.7 M842.3 305.7 A3.3 3.3 0 0 1 835.7 306.3 M835.7 306.3 A3.3 3.3 0 0 1 829.0 307.0 M829.0 307.0 A3.3 3.3 0 0 1 828.9 300.1 M828.9 300.1 A3.3 3.3 0 0 1 828.8 293.2 M828.8 293.2 A3.3 3.3 0 0 1 828.6 286.4 M828.6 286.4 A3.3 3.3 0 0 1 828.5 279.5 M828.5 279.5 A3.3 3.3 0 0 1 828.4 272.6 M828.4 272.6 A3.3 3.3 0 0 1 828.3 265.7 M828.3 265.7 A3.3 3.3 0 0 1 828.2 258.8 M828.2 258.8 A3.3 3.3 0 0 1 828.1 251.9 M828.1 251.9 A3.3 3.3 0 0 1 827.9 245.1 M827.9 245.1 A3.3 3.3 0 0 1 827.8 238.2 M827.8 238.2 A3.3 3.3 0 0 1 827.7 231.3 M827.7 231.3 A3.3 3.3 0 0 1 827.6 224.4 M827.6 224.4 A3.3 3.3 0 0 1 827.5 217.5 M827.5 217.5 A3.3 3.3 0 0 1 827.4 210.6 M827.4 210.6 A3.3 3.3 0 0 1 827.2 203.8 M827.2 203.8 A3.3 3.3 0 0 1 827.1 196.9 M827.1 196.9 A3.3 3.3 0 0 1 827.0 190.0 " fill="#c9c4e6" stroke="#6a6ab8" stroke-width="0.9"/>
<path d="M970 192 V282 Q970 293 982 292.8 L1058 287.3 Q1063.5 287 1063.5 282 V192" fill="none" stroke="#3c3c3c" stroke-width="2.8"/>
<path d="M970 192 V282 Q970 293 982 292.8 L1058 287.3 Q1063.5 287 1063.5 282 V192" fill="none" stroke="#f4f4f4" stroke-width="0.9" stroke-dasharray="1.1 2.1"/>
<path d="M970 242.5 H1063.5" fill="none" stroke="#3c3c3c" stroke-width="2.8"/>
<path d="M970 242.5 H1063.5" fill="none" stroke="#f4f4f4" stroke-width="0.9" stroke-dasharray="1.1 2.1"/>
<path d="M970 192 V282 Q970 293 982 292.8 L1058 287.3 Q1063.5 287 1063.5 282 V192 M970 242.5 H1063.5" fill="none" stroke="#e03030" stroke-width="0.7" stroke-dasharray="1.5 1.2"/>
<path d="M970 228 A14 14 0 0 1 984 241.5 M970 257 A14 14 0 0 0 984 243.5" fill="none" stroke="#333" stroke-width="0.8"/>
<circle cx="975" cy="233" r="4.6" fill="#fff" fill-opacity="0.6" stroke="#444" stroke-width="0.8"/><circle cx="975" cy="252" r="4.6" fill="#fff" fill-opacity="0.6" stroke="#444" stroke-width="0.8"/>
<text x="975" y="234.3" font-family="Liberation Sans" font-size="3.6" fill="#333" text-anchor="middle">205</text>
<text x="975" y="253.3" font-family="Liberation Sans" font-size="3.6" fill="#333" text-anchor="middle">206</text>
<path d="M1065.6 286 V273" stroke="#222" stroke-width="1.5"/>
<path d="M1065.6 273 A13.800000000000182 13 0 0 1 1079.4 286" fill="none" stroke="#333" stroke-width="0.8"/>
<circle cx="1072.5" cy="285" r="4.6" fill="#fff" stroke="#444" stroke-width="0.8"/>
<text x="1072.5" y="286.3" font-family="Liberation Sans" font-size="3.6" fill="#333" text-anchor="middle">207</text>
<path d="M1066.5 286 L1225 274.5" fill="none" stroke="#3c3c3c" stroke-width="2.6999999999999997"/>
<path d="M1066.5 286 L1225 274.5" fill="none" stroke="#f4f4f4" stroke-width="0.9" stroke-dasharray="1.1 2.1"/>
<path d="M1225 192.5 V275 M1225 275 L1252 273.5" fill="none" stroke="#3c3c3c" stroke-width="2.6999999999999997"/>
<path d="M1225 192.5 V275 M1225 275 L1252 273.5" fill="none" stroke="#f4f4f4" stroke-width="0.9" stroke-dasharray="1.1 2.1"/>
<path d="M1252 273.5 Q1265 246 1293.5 246 Q1322 246 1336 264 L1347 276 L1364 275.5" fill="none" stroke="#3c3c3c" stroke-width="2.6999999999999997"/>
<path d="M1252 273.5 Q1265 246 1293.5 246 Q1322 246 1336 264 L1347 276 L1364 275.5" fill="none" stroke="#f4f4f4" stroke-width="0.9" stroke-dasharray="1.1 2.1"/>
<path d="M1293.5 192.5 V246" stroke="#333" stroke-width="1"/>
<path d="M1293.5 199.0 A3.2 3.2 0 0 1 1300.0 199.0 M1300.0 199.0 A3.2 3.2 0 0 1 1306.5 199.0 M1306.5 199.0 A3.2 3.2 0 0 1 1313.0 199.0 M1313.0 199.0 A3.2 3.2 0 0 1 1319.5 199.0 M1319.5 199.0 A3.2 3.2 0 0 1 1326.0 199.0 M1326.0 199.0 A3.2 3.2 0 0 1 1332.5 199.0 M1332.5 199.0 A3.2 3.2 0 0 1 1339.0 199.0 M1339.0 199.0 A3.2 3.2 0 0 1 1345.5 199.0 M1345.5 199.0 A3.2 3.2 0 0 1 1352.0 199.0 M1352.0 199.0 A3.2 3.2 0 0 1 1358.5 199.0 M1358.5 199.0 A3.2 3.2 0 0 1 1365.0 199.0 M1365.0 199.0 A3.2 3.2 0 0 1 1365.0 205.5 M1365.0 205.5 A3.2 3.2 0 0 1 1365.0 212.0 M1365.0 212.0 A3.2 3.2 0 0 1 1365.0 218.5 M1365.0 218.5 A3.2 3.2 0 0 1 1365.0 225.0 M1365.0 225.0 A3.2 3.2 0 0 1 1365.0 231.5 M1365.0 231.5 A3.2 3.2 0 0 1 1365.0 238.0 M1365.0 238.0 A3.2 3.2 0 0 1 1365.0 244.5 M1365.0 244.5 A3.2 3.2 0 0 1 1365.0 251.0 M1365.0 251.0 A3.2 3.2 0 0 1 1365.0 257.5 M1365.0 257.5 A3.2 3.2 0 0 1 1365.0 264.0 M1365.0 264.0 A3.2 3.2 0 0 1 1365.0 270.5 M1365.0 270.5 A3.2 3.2 0 0 1 1365.0 277.0 M1365.0 277.0 A3.2 3.2 0 0 1 1356.0 277.0 M1356.0 277.0 A3.2 3.2 0 0 1 1347.0 277.0 M1347.0 277.0 A3.2 3.2 0 0 1 1341.1 273.8 M1341.1 273.8 A3.2 3.2 0 0 1 1335.1 270.6 M1335.1 270.6 A3.2 3.2 0 0 1 1329.2 267.3 M1329.2 267.3 A3.2 3.2 0 0 1 1323.2 264.1 M1323.2 264.1 A3.2 3.2 0 0 1 1317.3 260.9 M1317.3 260.9 A3.2 3.2 0 0 1 1311.3 257.7 M1311.3 257.7 A3.2 3.2 0 0 1 1305.4 254.4 M1305.4 254.4 A3.2 3.2 0 0 1 1299.4 251.2 M1299.4 251.2 A3.2 3.2 0 0 1 1293.5 248.0 M1293.5 248.0 A3.2 3.2 0 0 1 1293.5 241.0 M1293.5 241.0 A3.2 3.2 0 0 1 1293.5 234.0 M1293.5 234.0 A3.2 3.2 0 0 1 1293.5 227.0 M1293.5 227.0 A3.2 3.2 0 0 1 1293.5 220.0 M1293.5 220.0 A3.2 3.2 0 0 1 1293.5 213.0 M1293.5 213.0 A3.2 3.2 0 0 1 1293.5 206.0 M1293.5 206.0 A3.2 3.2 0 0 1 1293.5 199.0 " fill="none" stroke="#e8303a" stroke-width="0.9"/>
<path d="M1214.8 275.2 V262.2" stroke="#222" stroke-width="1.5"/>
<path d="M1214.8 262.2 A11.299999999999955 13 0 0 0 1203.5 275.2" fill="none" stroke="#333" stroke-width="0.8"/>
<circle cx="1209.2" cy="274.2" r="4.6" fill="#fff" stroke="#444" stroke-width="0.8"/>
<text x="1209.2" y="275.5" font-family="Liberation Sans" font-size="3.6" fill="#333" text-anchor="middle">208</text>
<path d="M1226 274.5 V261.5" stroke="#222" stroke-width="1.5"/>
<path d="M1226 261.5 A15.5 13 0 0 1 1241.5 274.5" fill="none" stroke="#333" stroke-width="0.8"/>
<circle cx="1233.8" cy="273.5" r="4.6" fill="#fff" stroke="#444" stroke-width="0.8"/>
<text x="1233.8" y="274.8" font-family="Liberation Sans" font-size="3.6" fill="#333" text-anchor="middle">209</text>
<path d="M1361.5 275 V262" stroke="#222" stroke-width="1.5"/>
<path d="M1361.5 262 A13.799999999999955 13 0 0 0 1347.7 275" fill="none" stroke="#333" stroke-width="0.8"/>
<circle cx="1354.6" cy="274" r="4.6" fill="#fff" stroke="#444" stroke-width="0.8"/>
<text x="1354.6" y="275.3" font-family="Liberation Sans" font-size="3.6" fill="#333" text-anchor="middle">210</text>
<path d="M1373.7 276 V263" stroke="#222" stroke-width="1.5"/>
<path d="M1373.7 263 A12.099999999999909 13 0 0 1 1385.8 276" fill="none" stroke="#333" stroke-width="0.8"/>
<circle cx="1379.8" cy="275" r="4.6" fill="#fff" stroke="#444" stroke-width="0.8"/>
<text x="1379.8" y="276.3" font-family="Liberation Sans" font-size="3.6" fill="#333" text-anchor="middle">211</text>
<path d="M1437.7 281.4 V268.4" stroke="#222" stroke-width="1.5"/>
<path d="M1437.7 268.4 A12.099999999999909 13 0 0 1 1449.8 281.4" fill="none" stroke="#333" stroke-width="0.8"/>
<circle cx="1443.8" cy="280.4" r="4.6" fill="#fff" stroke="#444" stroke-width="0.8"/>
<text x="1443.8" y="281.7" font-family="Liberation Sans" font-size="3.6" fill="#333" text-anchor="middle">212</text>
<path d="M1523.4 287.3 V274.3" stroke="#222" stroke-width="1.5"/>
<path d="M1523.4 274.3 A13.0 13 0 0 0 1510.4 287.3" fill="none" stroke="#333" stroke-width="0.8"/>
<circle cx="1516.9" cy="286.3" r="4.6" fill="#fff" stroke="#444" stroke-width="0.8"/>
<text x="1516.9" y="287.6" font-family="Liberation Sans" font-size="3.6" fill="#333" text-anchor="middle">213</text>
<path d="M1271.3 274.4 H1318 Q1312 285.6 1294.6 285.6 Q1277 285.6 1271.3 274.4 Z" fill="none" stroke="#333" stroke-width="0.9"/>
<rect x="1236.6" y="207.4" width="46.8" height="23.4" fill="none" stroke="#333" stroke-width="0.9" stroke-dasharray="1.6 1.3"/>
<rect x="1307" y="207.4" width="46.8" height="23.4" fill="none" stroke="#333" stroke-width="0.9" stroke-dasharray="1.6 1.3"/>
<rect x="1387.5" y="206" width="22.9" height="56.2" fill="none" stroke="#333" stroke-width="0.9" stroke-dasharray="1.6 1.3"/>
<rect x="1451.2" y="218" width="57.2" height="32.1" fill="none" stroke="#333" stroke-width="0.9" stroke-dasharray="1.6 1.3"/>
<path d="M1364 192.5 V276 M1364 275.5 L1433.4 281.4 M1433.4 192.5 V281.4 L1526 287.3 M1526 192.5 V287.3 L1610 293.4" fill="none" stroke="#3c3c3c" stroke-width="2.6999999999999997"/>
<path d="M1364 192.5 V276 M1364 275.5 L1433.4 281.4 M1433.4 192.5 V281.4 L1526 287.3 M1526 192.5 V287.3 L1610 293.4" fill="none" stroke="#f4f4f4" stroke-width="0.9" stroke-dasharray="1.1 2.1"/>
<path d="M1526 241.5 H1610" fill="none" stroke="#3c3c3c" stroke-width="2.6999999999999997"/>
<path d="M1526 241.5 H1610" fill="none" stroke="#f4f4f4" stroke-width="0.9" stroke-dasharray="1.1 2.1"/>
<path d="M1526 192.5 V241.5 H1610" fill="none" stroke="#c03030" stroke-width="0.7" stroke-dasharray="1.5 1.2"/>
<path d="M1610 229.3 A12 12.5 0 0 0 1610 254.4" fill="none" stroke="#333" stroke-width="0.8"/>
<text x="1573" y="208.5" font-family="Liberation Sans" font-size="6" fill="#e05a30" text-anchor="middle">204.512 sf</text>
<path d="M657.5 317.5 L738 312.3 Q746 312 746.3 322 V500 Q746 509 738 509 L657.5 507" fill="none" stroke="#2c2c50" stroke-width="2.8"/>
<path d="M657.5 317.5 L738 312.3 Q746 312 746.3 322 V500 Q746 509 738 509 L657.5 507" fill="none" stroke="#f4f4f4" stroke-width="0.9" stroke-dasharray="1.1 2.1"/>
<path d="M657.5 365.5 H746 M657.5 458 H746" fill="none" stroke="#3a3a5a" stroke-width="2.8"/>
<path d="M657.5 365.5 H746 M657.5 458 H746" fill="none" stroke="#f4f4f4" stroke-width="0.9" stroke-dasharray="1.1 2.1"/>
<rect x="683.7" y="377" width="36.3" height="69.6" fill="none" stroke="#333" stroke-width="1"/>
<path d="M746 351.5 A14 14 0 0 0 732 364.5 M746 379.5 A14 14 0 0 1 732 366.5" fill="none" stroke="#333" stroke-width="0.8"/>
<circle cx="743" cy="356.5" r="4.6" fill="#fff" fill-opacity="0.6" stroke="#444" stroke-width="0.8"/><circle cx="743" cy="374.5" r="4.6" fill="#fff" fill-opacity="0.6" stroke="#444" stroke-width="0.8"/>
<text x="743" y="357.8" font-family="Liberation Sans" font-size="3.6" fill="#333" text-anchor="middle">214</text>
<text x="743" y="375.8" font-family="Liberation Sans" font-size="3.6" fill="#333" text-anchor="middle">215</text>
<path d="M746 444 A14 14 0 0 0 732 457 M746 472 A14 14 0 0 1 732 459" fill="none" stroke="#333" stroke-width="0.8"/>
<circle cx="743" cy="449" r="4.6" fill="#fff" fill-opacity="0.6" stroke="#444" stroke-width="0.8"/><circle cx="743" cy="467" r="4.6" fill="#fff" fill-opacity="0.6" stroke="#444" stroke-width="0.8"/>
<text x="743" y="450.3" font-family="Liberation Sans" font-size="3.6" fill="#333" text-anchor="middle">216</text>
<text x="743" y="468.3" font-family="Liberation Sans" font-size="3.6" fill="#333" text-anchor="middle">217</text>
<path d="M655.0 315.0 A3.3 3.3 0 0 1 661.7 314.5 M661.7 314.5 A3.3 3.3 0 0 1 668.4 313.9 M668.4 313.9 A3.3 3.3 0 0 1 675.1 313.4 M675.1 313.4 A3.3 3.3 0 0 1 681.8 312.8 M681.8 312.8 A3.3 3.3 0 0 1 688.5 312.3 M688.5 312.3 A3.3 3.3 0 0 1 695.2 311.8 M695.2 311.8 A3.3 3.3 0 0 1 701.8 311.2 M701.8 311.2 A3.3 3.3 0 0 1 708.5 310.7 M708.5 310.7 A3.3 3.3 0 0 1 715.2 310.2 M715.2 310.2 A3.3 3.3 0 0 1 721.9 309.6 M721.9 309.6 A3.3 3.3 0 0 1 728.6 309.1 M728.6 309.1 A3.3 3.3 0 0 1 735.3 308.5 M735.3 308.5 A3.3 3.3 0 0 1 742.0 308.0 M742.0 308.0 A3.3 3.3 0 0 1 749.5 318.0 M749.5 318.0 A3.3 3.3 0 0 1 749.5 324.7 M749.5 324.7 A3.3 3.3 0 0 1 749.5 331.4 M749.5 331.4 A3.3 3.3 0 0 1 749.5 338.0 M749.5 338.0 A3.3 3.3 0 0 1 749.5 344.7 M749.5 344.7 A3.3 3.3 0 0 1 749.5 351.4 M749.5 351.4 A3.3 3.3 0 0 1 749.5 358.1 M749.5 358.1 A3.3 3.3 0 0 1 749.5 364.8 M749.5 364.8 A3.3 3.3 0 0 1 749.5 371.4 M749.5 371.4 A3.3 3.3 0 0 1 749.5 378.1 M749.5 378.1 A3.3 3.3 0 0 1 749.5 384.8 M749.5 384.8 A3.3 3.3 0 0 1 749.5 391.5 M749.5 391.5 A3.3 3.3 0 0 1 749.5 398.1 M749.5 398.1 A3.3 3.3 0 0 1 749.5 404.8 M749.5 404.8 A3.3 3.3 0 0 1 749.5 411.5 M749.5 411.5 A3.3 3.3 0 0 1 749.5 418.2 M749.5 418.2 A3.3 3.3 0 0 1 749.5 424.9 M749.5 424.9 A3.3 3.3 0 0 1 749.5 431.5 M749.5 431.5 A3.3 3.3 0 0 1 749.5 438.2 M749.5 438.2 A3.3 3.3 0 0 1 749.5 444.9 M749.5 444.9 A3.3 3.3 0 0 1 749.5 451.6 M749.5 451.6 A3.3 3.3 0 0 1 749.5 458.2 M749.5 458.2 A3.3 3.3 0 0 1 749.5 464.9 M749.5 464.9 A3.3 3.3 0 0 1 749.5 471.6 M749.5 471.6 A3.3 3.3 0 0 1 749.5 478.3 M749.5 478.3 A3.3 3.3 0 0 1 749.5 485.0 M749.5 485.0 A3.3 3.3 0 0 1 749.5 491.6 M749.5 491.6 A3.3 3.3 0 0 1 749.5 498.3 M749.5 498.3 A3.3 3.3 0 0 1 749.5 505.0 M749.5 505.0 A3.3 3.3 0 0 1 740.0 512.5 M740.0 512.5 A3.3 3.3 0 0 1 732.9 512.3 M732.9 512.3 A3.3 3.3 0 0 1 725.8 512.1 M725.8 512.1 A3.3 3.3 0 0 1 718.8 511.9 M718.8 511.9 A3.3 3.3 0 0 1 711.7 511.7 M711.7 511.7 A3.3 3.3 0 0 1 704.6 511.5 M704.6 511.5 A3.3 3.3 0 0 1 697.5 511.2 M697.5 511.2 A3.3 3.3 0 0 1 690.4 511.0 M690.4 511.0 A3.3 3.3 0 0 1 683.3 510.8 M683.3 510.8 A3.3 3.3 0 0 1 676.2 510.6 M676.2 510.6 A3.3 3.3 0 0 1 669.2 510.4 M669.2 510.4 A3.3 3.3 0 0 1 662.1 510.2 M662.1 510.2 A3.3 3.3 0 0 1 655.0 510.0 M655.0 510.0 A3.3 3.3 0 0 1 655.0 503.3 M655.0 503.3 A3.3 3.3 0 0 1 655.0 496.6 M655.0 496.6 A3.3 3.3 0 0 1 655.0 489.8 M655.0 489.8 A3.3 3.3 0 0 1 655.0 483.1 M655.0 483.1 A3.3 3.3 0 0 1 655.0 476.4 M655.0 476.4 A3.3 3.3 0 0 1 655.0 469.7 M655.0 469.7 A3.3 3.3 0 0 1 655.0 462.9 M655.0 462.9 A3.3 3.3 0 0 1 655.0 456.2 M655.0 456.2 A3.3 3.3 0 0 1 655.0 449.5 M655.0 449.5 A3.3 3.3 0 0 1 655.0 442.8 M655.0 442.8 A3.3 3.3 0 0 1 655.0 436.0 M655.0 436.0 A3.3 3.3 0 0 1 655.0 429.3 M655.0 429.3 A3.3 3.3 0 0 1 655.0 422.6 M655.0 422.6 A3.3 3.3 0 0 1 655.0 415.9 M655.0 415.9 A3.3 3.3 0 0 1 655.0 409.1 M655.0 409.1 A3.3 3.3 0 0 1 655.0 402.4 M655.0 402.4 A3.3 3.3 0 0 1 655.0 395.7 M655.0 395.7 A3.3 3.3 0 0 1 655.0 389.0 M655.0 389.0 A3.3 3.3 0 0 1 655.0 382.2 M655.0 382.2 A3.3 3.3 0 0 1 655.0 375.5 M655.0 375.5 A3.3 3.3 0 0 1 655.0 368.8 M655.0 368.8 A3.3 3.3 0 0 1 655.0 362.1 M655.0 362.1 A3.3 3.3 0 0 1 655.0 355.3 M655.0 355.3 A3.3 3.3 0 0 1 655.0 348.6 M655.0 348.6 A3.3 3.3 0 0 1 655.0 341.9 M655.0 341.9 A3.3 3.3 0 0 1 655.0 335.2 M655.0 335.2 A3.3 3.3 0 0 1 655.0 328.4 M655.0 328.4 A3.3 3.3 0 0 1 655.0 321.7 M655.0 321.7 A3.3 3.3 0 0 1 655.0 315.0 " fill="#c9c4e6" stroke="#6a6ab8" stroke-width="0.9"/>
<path d="M746 312.5 L829 304.5" stroke="#333" stroke-width="0.9"/>
<path d="M926 296 L975 293" stroke="#333" stroke-width="0.9" stroke-dasharray="1.3 1.3"/>
<path d="M746 509.5 L831 519" stroke="#333" stroke-width="0.9"/>
<rect x="774" y="335.8" width="320" height="151.4" rx="6" fill="none" stroke="#333" stroke-width="0.8" stroke-dasharray="1.3 1.3"/>
<path d="M1017 411.7 H1090" fill="none" stroke="#44505c" stroke-width="2.8"/>
<path d="M1017 411.7 H1090" fill="none" stroke="#f4f4f4" stroke-width="0.9" stroke-dasharray="1.1 2.1"/>
<path d="M1017 397.5 A14 14 0 0 1 1031 410.7 M1017 426 A14 14 0 0 0 1031 412.7" fill="none" stroke="#333" stroke-width="0.8"/>
<circle cx="1022" cy="402" r="4.6" fill="#fff" fill-opacity="0.6" stroke="#444" stroke-width="0.8"/><circle cx="1022" cy="421" r="4.6" fill="#fff" fill-opacity="0.6" stroke="#444" stroke-width="0.8"/>
<text x="1022" y="403.3" font-family="Liberation Sans" font-size="3.6" fill="#333" text-anchor="middle">218</text>
<text x="1022" y="422.3" font-family="Liberation Sans" font-size="3.6" fill="#333" text-anchor="middle">219</text>
<text x="954" y="414.5" font-family="Liberation Sans" font-size="8.5" font-weight="bold" fill="#e02030">160.886 sq m</text>
<path d="M1088.4 321 L1254 334 Q1268 336 1268 350 V473 Q1268 487 1254 487 L1088.4 500.5 Q1080.4 499.5 1080.4 490.5 V331 Q1080.4 322 1088.4 321 Z" fill="none" stroke="#3c3c3c" stroke-width="2.6999999999999997"/>
<path d="M1088.4 321 L1254 334 Q1268 336 1268 350 V473 Q1268 487 1254 487 L1088.4 500.5 Q1080.4 499.5 1080.4 490.5 V331 Q1080.4 322 1088.4 321 Z" fill="none" stroke="#f4f4f4" stroke-width="0.9" stroke-dasharray="1.1 2.1"/>
<path d="M1088.4 325 L1254 338 Q1264 340 1264 350 V473 Q1264 483 1254 483 L1088.4 496.5 Q1084.4 495.5 1084.4 490.5 V331 Q1084.4 326 1088.4 325 Z" fill="none" stroke="#555" stroke-width="0.8"/>
<path d="M1091.3 336 H1231 V487 H1091.3 Z" fill="none" stroke="#3c3c3c" stroke-width="2.6"/>
<path d="M1091.3 336 H1231 V487 H1091.3 Z" fill="none" stroke="#f4f4f4" stroke-width="0.9" stroke-dasharray="1.1 2.1"/>
<path d="M1130 336 V487 M1209.3 336 V424 M1231 336 V487 M1091.3 424 H1231" fill="none" stroke="#3c3c3c" stroke-width="2.4"/>
<path d="M1130 336 V487 M1209.3 336 V424 M1231 336 V487 M1091.3 424 H1231" fill="none" stroke="#f4f4f4" stroke-width="0.9" stroke-dasharray="1.1 2.1"/>
<path d="M1091.3 374.8 H1130 M1180 352 V385.6 H1133" fill="none" stroke="#3c3c3c" stroke-width="2.4"/>
<path d="M1091.3 374.8 H1130 M1180 352 V385.6 H1133" fill="none" stroke="#f4f4f4" stroke-width="0.9" stroke-dasharray="1.1 2.1"/>
<path d="M1094 378 H1111 M1114 378 H1128 M1094 382 H1111 M1114 382 H1128 M1094 386 H1111 M1114 386 H1128 M1094 390 H1111 M1114 390 H1128 M1094 394 H1111 M1114 394 H1128 M1094 398 H1111 M1114 398 H1128 M1094 402 H1111 M1114 402 H1128 M1094 406 H1111 M1114 406 H1128 M1094 410 H1111 M1114 410 H1128 M1094 414 H1111 M1114 414 H1128 M1094 418 H1111 M1114 418 H1128" stroke="#333" stroke-width="1" stroke-dasharray="1.6 1.2"/><path d="M1112.5 375 V420" stroke="#333" stroke-width="1.4"/>
<rect x="1134" y="370" width="9" height="14" fill="none" stroke="#333" stroke-width="0.8" stroke-dasharray="1.4 1"/><rect x="1145.5" y="370" width="9" height="14" fill="none" stroke="#333" stroke-width="0.8" stroke-dasharray="1.4 1"/><rect x="1157" y="370" width="9" height="14" fill="none" stroke="#333" stroke-width="0.8" stroke-dasharray="1.4 1"/><rect x="1168.5" y="370" width="9" height="14" fill="none" stroke="#333" stroke-width="0.8" stroke-dasharray="1.4 1"/>
<path d="M1214 345 L1226 420 M1226 345 L1214 420" stroke="#444" stroke-width="0.6"/>
<path d="M1232 346.7 V436 H1268 V346.7" fill="none" stroke="#e03030" stroke-width="0.8"/>
<path d="M1232 346.7 L1268 391 M1268 346.7 L1232 391 M1232 391 H1268 M1232 391 L1268 436 M1268 391 L1232 436" stroke="#556633" stroke-width="0.6"/><rect x="1235" y="349" width="30" height="84" fill="none" stroke="#446633" stroke-width="0.8"/>
<path d="M1231.0 346.0 A3.0 3.0 0 0 1 1237.3 346.0 M1237.3 346.0 A3.0 3.0 0 0 1 1243.7 346.0 M1243.7 346.0 A3.0 3.0 0 0 1 1250.0 346.0 M1250.0 346.0 A3.0 3.0 0 0 1 1256.3 346.0 M1256.3 346.0 A3.0 3.0 0 0 1 1262.7 346.0 M1262.7 346.0 A3.0 3.0 0 0 1 1269.0 346.0 M1269.0 346.0 A3.0 3.0 0 0 1 1269.0 352.1 M1269.0 352.1 A3.0 3.0 0 0 1 1269.0 358.1 M1269.0 358.1 A3.0 3.0 0 0 1 1269.0 364.2 M1269.0 364.2 A3.0 3.0 0 0 1 1269.0 370.3 M1269.0 370.3 A3.0 3.0 0 0 1 1269.0 376.3 M1269.0 376.3 A3.0 3.0 0 0 1 1269.0 382.4 M1269.0 382.4 A3.0 3.0 0 0 1 1269.0 388.5 M1269.0 388.5 A3.0 3.0 0 0 1 1269.0 394.5 M1269.0 394.5 A3.0 3.0 0 0 1 1269.0 400.6 M1269.0 400.6 A3.0 3.0 0 0 1 1269.0 406.7 M1269.0 406.7 A3.0 3.0 0 0 1 1269.0 412.7 M1269.0 412.7 A3.0 3.0 0 0 1 1269.0 418.8 M1269.0 418.8 A3.0 3.0 0 0 1 1269.0 424.9 M1269.0 424.9 A3.0 3.0 0 0 1 1269.0 430.9 M1269.0 430.9 A3.0 3.0 0 0 1 1269.0 437.0 M1269.0 437.0 A3.0 3.0 0 0 1 1262.7 437.0 M1262.7 437.0 A3.0 3.0 0 0 1 1256.3 437.0 M1256.3 437.0 A3.0 3.0 0 0 1 1250.0 437.0 M1250.0 437.0 A3.0 3.0 0 0 1 1243.7 437.0 M1243.7 437.0 A3.0 3.0 0 0 1 1237.3 437.0 M1237.3 437.0 A3.0 3.0 0 0 1 1231.0 437.0 M1231.0 437.0 A3.0 3.0 0 0 1 1231.0 430.9 M1231.0 430.9 A3.0 3.0 0 0 1 1231.0 424.9 M1231.0 424.9 A3.0 3.0 0 0 1 1231.0 418.8 M1231.0 418.8 A3.0 3.0 0 0 1 1231.0 412.7 M1231.0 412.7 A3.0 3.0 0 0 1 1231.0 406.7 M1231.0 406.7 A3.0 3.0 0 0 1 1231.0 400.6 M1231.0 400.6 A3.0 3.0 0 0 1 1231.0 394.5 M1231.0 394.5 A3.0 3.0 0 0 1 1231.0 388.5 M1231.0 388.5 A3.0 3.0 0 0 1 1231.0 382.4 M1231.0 382.4 A3.0 3.0 0 0 1 1231.0 376.3 M1231.0 376.3 A3.0 3.0 0 0 1 1231.0 370.3 M1231.0 370.3 A3.0 3.0 0 0 1 1231.0 364.2 M1231.0 364.2 A3.0 3.0 0 0 1 1231.0 358.1 M1231.0 358.1 A3.0 3.0 0 0 1 1231.0 352.1 M1231.0 352.1 A3.0 3.0 0 0 1 1231.0 346.0 " fill="none" stroke="#e8303a" stroke-width="0.8"/>
<path d="M1269 391 H1276" stroke="#e03030" stroke-width="0.8"/>
<text x="1293" y="395.5" font-family="Liberation Sans" font-size="3.8" fill="#e03030" text-anchor="middle">Split into three</text>
<rect x="1239" y="450" width="25" height="19.7" fill="none" stroke="#333" stroke-width="0.9"/><path d="M1239 450 L1264 469.7 M1264 450 L1239 469.7" stroke="#333" stroke-width="0.6"/>
<rect x="1250" y="440" width="12" height="8" fill="none" stroke="#333" stroke-width="0.7"/>
<circle cx="1168" cy="433" r="2.8" fill="none" stroke="#222" stroke-width="1.6"/><path d="M1165 428 H1171" stroke="#222" stroke-width="1.4"/>
<circle cx="1182" cy="433" r="2.8" fill="none" stroke="#222" stroke-width="1.6"/><path d="M1179 428 H1185" stroke="#222" stroke-width="1.4"/>
<circle cx="1197" cy="433" r="2.8" fill="none" stroke="#222" stroke-width="1.6"/><path d="M1194 428 H1200" stroke="#222" stroke-width="1.4"/>
<circle cx="1222" cy="433" r="2.8" fill="none" stroke="#222" stroke-width="1.6"/><path d="M1219 428 H1225" stroke="#222" stroke-width="1.4"/>
<path d="M1150 430 V450 H1170 V440 M1180 440 V448 M1195 440 V448 M1210 440 V450" fill="none" stroke="#333" stroke-width="1.2"/>
<rect x="1158" y="470" width="50" height="14" fill="none" stroke="#333" stroke-width="1.6"/><rect x="1168" y="473" width="7" height="6" fill="none" stroke="#222" stroke-width="1.2"/><rect x="1188" y="473" width="7" height="6" fill="none" stroke="#222" stroke-width="1.2"/>
<path d="M1155 440 L1150 453" stroke="#333" stroke-width="0.7"/>
<path d="M1092 456 H1101 V470" fill="none" stroke="#333" stroke-width="0.9"/><rect x="1093" y="468" width="6" height="9" fill="none" stroke="#222" stroke-width="1.2"/>
<circle cx="1120" cy="337" r="4.6" fill="#fff" stroke="#444" stroke-width="0.8"/>
<text x="1120" y="338.3" font-family="Liberation Sans" font-size="3.6" fill="#333" text-anchor="middle">220</text>
<circle cx="1138" cy="337" r="4.6" fill="#fff" stroke="#444" stroke-width="0.8"/>
<text x="1138" y="338.3" font-family="Liberation Sans" font-size="3.6" fill="#333" text-anchor="middle">221</text>
<circle cx="1146" cy="456" r="4.6" fill="#fff" stroke="#444" stroke-width="0.8"/>
<text x="1146" y="457.3" font-family="Liberation Sans" font-size="3.6" fill="#333" text-anchor="middle">222</text>
<circle cx="1180" cy="470" r="4.6" fill="#fff" stroke="#444" stroke-width="0.8"/>
<text x="1180" y="471.3" font-family="Liberation Sans" font-size="3.6" fill="#333" text-anchor="middle">223</text>
<circle cx="1118" cy="485" r="4.6" fill="#fff" stroke="#444" stroke-width="0.8"/>
<text x="1118" y="486.3" font-family="Liberation Sans" font-size="3.6" fill="#333" text-anchor="middle">224</text>
<circle cx="1138" cy="485" r="4.6" fill="#fff" stroke="#444" stroke-width="0.8"/>
<text x="1138" y="486.3" font-family="Liberation Sans" font-size="3.6" fill="#333" text-anchor="middle">225</text>
<circle cx="1180" cy="345" r="4.6" fill="#fff" stroke="#444" stroke-width="0.8"/>
<text x="1180" y="346.3" font-family="Liberation Sans" font-size="3.6" fill="#333" text-anchor="middle">226</text>
<path d="M1252 489 L1248 497 L1252 505" fill="none" stroke="#333" stroke-width="0.8"/><circle cx="1257" cy="507.4" r="9" fill="#fff" stroke="#333" stroke-width="0.9"/><path d="M1248 507.4 H1266" stroke="#333" stroke-width="0.6"/>
<text x="1257" y="505.5" font-family="Liberation Sans" font-size="3.8" fill="#333" text-anchor="middle">1</text><text x="1257" y="512" font-family="Liberation Sans" font-size="3.8" fill="#333" text-anchor="middle">A6.02</text>
<path d="M1335 333 L1495 321 Q1509.5 321 1509.5 335 V488 Q1509.5 501.6 1495 501.6 L1335 487.7 Q1320 486 1320 472 V348 Q1320 334 1335 333 Z" fill="none" stroke="#3c3c3c" stroke-width="2.6999999999999997"/>
<path d="M1335 333 L1495 321 Q1509.5 321 1509.5 335 V488 Q1509.5 501.6 1495 501.6 L1335 487.7 Q1320 486 1320 472 V348 Q1320 334 1335 333 Z" fill="none" stroke="#f4f4f4" stroke-width="0.9" stroke-dasharray="1.1 2.1"/>
<path d="M1337 337 L1495 325 Q1505.5 325 1505.5 335 V488 Q1505.5 497.6 1495 497.6 L1337 483.7 Q1324 482 1324 472 V348 Q1324 338 1337 337 Z" fill="none" stroke="#555" stroke-width="0.8"/>
<path d="M1358 336 V487 M1358 424 H1459 M1459 336 V487 M1459 398.3 H1497 M1497 336 V487 M1324 436 H1358 M1428 424 V456 H1459" fill="none" stroke="#3c3c3c" stroke-width="2.4"/>
<path d="M1358 336 V487 M1358 424 H1459 M1459 336 V487 M1459 398.3 H1497 M1497 336 V487 M1324 436 H1358 M1428 424 V456 H1459" fill="none" stroke="#f4f4f4" stroke-width="0.9" stroke-dasharray="1.1 2.1"/>
<path d="M1383 424 V446 M1383 446 L1378 452" fill="none" stroke="#3c3c3c" stroke-width="1.7999999999999998"/>
<rect x="1398" y="427" width="27" height="19" fill="none" stroke="#333" stroke-width="0.8" stroke-dasharray="1.5 1.2"/><path d="M1411.5 431 V441" stroke="#333" stroke-width="0.7" stroke-dasharray="1.5 1.2"/><path d="M1440 435 L1448 445" stroke="#333" stroke-width="0.7"/><circle cx="1448" cy="445.5" r="0.9" fill="#222"/>
<rect x="1324.5" y="391" width="28" height="38" fill="none" stroke="#333" stroke-width="0.9"/><path d="M1324.5 391 L1352.5 429 M1352.5 391 L1324.5 429" stroke="#333" stroke-width="0.6"/>
<path d="M1324.3 351.7 L1352.7 388.8 M1352.7 351.7 L1324.3 388.8" stroke="#b09040" stroke-width="0.6"/>
<rect x="1327" y="450" width="25" height="20" fill="none" stroke="#333" stroke-width="0.9"/><path d="M1327 470 L1352 450" stroke="#333" stroke-width="0.6"/>
<path d="M1363.0 350.0 A3.4 3.4 0 0 1 1370.2 350.0 M1370.2 350.0 A3.4 3.4 0 0 1 1377.3 350.0 M1377.3 350.0 A3.4 3.4 0 0 1 1384.5 350.0 M1384.5 350.0 A3.4 3.4 0 0 1 1391.7 350.0 M1391.7 350.0 A3.4 3.4 0 0 1 1398.8 350.0 M1398.8 350.0 A3.4 3.4 0 0 1 1406.0 350.0 M1406.0 350.0 A3.4 3.4 0 0 1 1413.2 350.0 M1413.2 350.0 A3.4 3.4 0 0 1 1420.3 350.0 M1420.3 350.0 A3.4 3.4 0 0 1 1427.5 350.0 M1427.5 350.0 A3.4 3.4 0 0 1 1434.7 350.0 M1434.7 350.0 A3.4 3.4 0 0 1 1441.8 350.0 M1441.8 350.0 A3.4 3.4 0 0 1 1449.0 350.0 M1449.0 350.0 A3.4 3.4 0 0 1 1449.0 357.6 M1449.0 357.6 A3.4 3.4 0 0 1 1449.0 365.2 M1449.0 365.2 A3.4 3.4 0 0 1 1449.0 372.9 M1449.0 372.9 A3.4 3.4 0 0 1 1449.0 380.5 M1449.0 380.5 A3.4 3.4 0 0 1 1449.0 388.1 M1449.0 388.1 A3.4 3.4 0 0 1 1449.0 395.8 M1449.0 395.8 A3.4 3.4 0 0 1 1449.0 403.4 M1449.0 403.4 A3.4 3.4 0 0 1 1449.0 411.0 M1449.0 411.0 A3.4 3.4 0 0 1 1441.8 411.0 M1441.8 411.0 A3.4 3.4 0 0 1 1434.7 411.0 M1434.7 411.0 A3.4 3.4 0 0 1 1427.5 411.0 M1427.5 411.0 A3.4 3.4 0 0 1 1420.3 411.0 M1420.3 411.0 A3.4 3.4 0 0 1 1413.2 411.0 M1413.2 411.0 A3.4 3.4 0 0 1 1406.0 411.0 M1406.0 411.0 A3.4 3.4 0 0 1 1398.8 411.0 M1398.8 411.0 A3.4 3.4 0 0 1 1391.7 411.0 M1391.7 411.0 A3.4 3.4 0 0 1 1384.5 411.0 M1384.5 411.0 A3.4 3.4 0 0 1 1377.3 411.0 M1377.3 411.0 A3.4 3.4 0 0 1 1370.2 411.0 M1370.2 411.0 A3.4 3.4 0 0 1 1363.0 411.0 M1363.0 411.0 A3.4 3.4 0 0 1 1363.0 403.4 M1363.0 403.4 A3.4 3.4 0 0 1 1363.0 395.8 M1363.0 395.8 A3.4 3.4 0 0 1 1363.0 388.1 M1363.0 388.1 A3.4 3.4 0 0 1 1363.0 380.5 M1363.0 380.5 A3.4 3.4 0 0 1 1363.0 372.9 M1363.0 372.9 A3.4 3.4 0 0 1 1363.0 365.2 M1363.0 365.2 A3.4 3.4 0 0 1 1363.0 357.6 M1363.0 357.6 A3.4 3.4 0 0 1 1363.0 350.0 " fill="#f6c4c8" stroke="#e8303a" stroke-width="0.9"/>
<path d="M1373 353 V408 M1389 353 V408 M1405 353 V408 M1421 353 V408 M1437 353 V408 M1366 368 H1446 M1366 390 H1446" stroke="#7a2030" stroke-width="0.7"/>
<text x="1420" y="383" font-family="Liberation Sans" font-size="3.5" fill="#e03030" text-anchor="middle">Merge/Overlap</text>
<path d="M1462 404 H1478 M1481 404 H1496 M1462 408 H1478 M1481 408 H1496 M1462 412 H1478 M1481 412 H1496 M1462 416 H1478 M1481 416 H1496 M1462 420 H1478 M1481 420 H1496 M1462 424 H1478 M1481 424 H1496 M1462 428 H1478 M1481 428 H1496 M1462 432 H1478 M1481 432 H1496 M1462 436 H1478 M1481 436 H1496 M1462 440 H1478 M1481 440 H1496 M1462 444 H1478 M1481 444 H1496" stroke="#333" stroke-width="1" stroke-dasharray="1.6 1.2"/><path d="M1479.5 401 V448" stroke="#333" stroke-width="1.4"/>
<rect x="1368" y="474" width="45" height="13" fill="none" stroke="#333" stroke-width="1.6"/><rect x="1378" y="477" width="7" height="6" fill="none" stroke="#222" stroke-width="1.2"/><rect x="1398" y="477" width="7" height="6" fill="none" stroke="#222" stroke-width="1.2"/>
<circle cx="1366" cy="433" r="2.8" fill="none" stroke="#333" stroke-width="1"/>
<circle cx="1391" cy="433" r="2.8" fill="none" stroke="#333" stroke-width="1"/>
<circle cx="1358" cy="463" r="2.8" fill="none" stroke="#333" stroke-width="1"/>
<circle cx="1447" cy="337" r="4.6" fill="#fff" stroke="#444" stroke-width="0.8"/>
<text x="1447" y="338.3" font-family="Liberation Sans" font-size="3.6" fill="#333" text-anchor="middle">227</text>
<circle cx="1470" cy="337" r="4.6" fill="#fff" stroke="#444" stroke-width="0.8"/>
<text x="1470" y="338.3" font-family="Liberation Sans" font-size="3.6" fill="#333" text-anchor="middle">228</text>
<circle cx="1452" cy="456" r="4.6" fill="#fff" stroke="#444" stroke-width="0.8"/>
<text x="1452" y="457.3" font-family="Liberation Sans" font-size="3.6" fill="#333" text-anchor="middle">229</text>
<circle cx="1349" cy="463" r="4.6" fill="#fff" stroke="#444" stroke-width="0.8"/>
<text x="1349" y="464.3" font-family="Liberation Sans" font-size="3.6" fill="#333" text-anchor="middle">230</text>
<circle cx="1447" cy="486" r="4.6" fill="#fff" stroke="#444" stroke-width="0.8"/>
<text x="1447" y="487.3" font-family="Liberation Sans" font-size="3.6" fill="#333" text-anchor="middle">231</text>
<circle cx="1470" cy="486" r="4.6" fill="#fff" stroke="#444" stroke-width="0.8"/>
<text x="1470" y="487.3" font-family="Liberation Sans" font-size="3.6" fill="#333" text-anchor="middle">232</text>
<path d="M1509.5 335.8 H1610 M1509.5 474.8 H1610" stroke="#333" stroke-width="1.1"/>
<rect x="1508.5" y="348.7" width="54.5" height="125.1" rx="8" fill="none" stroke="#444" stroke-width="2.2"/>
<path d="M1508.5 411.7 H1563" fill="none" stroke="#3c3c3c" stroke-width="2.6"/>
<path d="M1508.5 411.7 H1563" fill="none" stroke="#f4f4f4" stroke-width="0.9" stroke-dasharray="1.1 2.1"/>
<path d="M1563 397.5 A14 14 0 0 0 1549 410.7 M1563 426 A14 14 0 0 1 1549 412.7" fill="none" stroke="#333" stroke-width="0.8"/>
<circle cx="1560" cy="402" r="4.6" fill="#fff" stroke="#444" stroke-width="0.8"/><circle cx="1560" cy="421" r="4.6" fill="#fff" stroke="#444" stroke-width="0.8"/>
<text x="1560" y="403.3" font-family="Liberation Sans" font-size="3.6" fill="#333" text-anchor="middle">233</text>
<text x="1560" y="422.3" font-family="Liberation Sans" font-size="3.6" fill="#333" text-anchor="middle">234</text>
<path d="M1094 321.5 L1500 325 M1335 333 L1266 334" stroke="#333" stroke-width="0.8" stroke-dasharray="1.3 1.3"/>
<path d="M831.2 630 V528 Q831.2 519 840 519 L916 524.6 Q924.8 525 924.8 534 V630" fill="none" stroke="#3c3c3c" stroke-width="2.6999999999999997"/>
<path d="M831.2 630 V528 Q831.2 519 840 519 L916 524.6 Q924.8 525 924.8 534 V630" fill="none" stroke="#f4f4f4" stroke-width="0.9" stroke-dasharray="1.1 2.1"/>
<path d="M831.2 572.8 H924.8" fill="none" stroke="#3c3c3c" stroke-width="2.6999999999999997"/>
<path d="M831.2 572.8 H924.8" fill="none" stroke="#f4f4f4" stroke-width="0.9" stroke-dasharray="1.1 2.1"/>
<path d="M924.8 557.8 A15 15 0 0 0 909.8 571.8 M924.8 587.8 A15 15 0 0 1 909.8 573.8" fill="none" stroke="#333" stroke-width="0.8"/>
<circle cx="924.8" cy="563.3" r="4.8" fill="#fff" stroke="#444" stroke-width="0.8"/><circle cx="924.8" cy="582.3" r="4.8" fill="#fff" stroke="#444" stroke-width="0.8"/>
<text x="924.8" y="564.6" font-family="Liberation Sans" font-size="3.6" fill="#333" text-anchor="middle">235</text>
<text x="924.8" y="583.6" font-family="Liberation Sans" font-size="3.6" fill="#333" text-anchor="middle">236</text>
<path d="M970 630 V538.3 Q970 529.3 979 529.3 L1054.7 535 Q1063.7 535 1063.7 544 V630" fill="none" stroke="#3c3c3c" stroke-width="2.6999999999999997"/>
<path d="M970 630 V538.3 Q970 529.3 979 529.3 L1054.7 535 Q1063.7 535 1063.7 544 V630" fill="none" stroke="#f4f4f4" stroke-width="0.9" stroke-dasharray="1.1 2.1"/>
<path d="M970 582.2 H1063.7" fill="none" stroke="#3c3c3c" stroke-width="2.6999999999999997"/>
<path d="M970 582.2 H1063.7" fill="none" stroke="#f4f4f4" stroke-width="0.9" stroke-dasharray="1.1 2.1"/>
<path d="M1016.4 532.15 V630" fill="none" stroke="#3c3c3c" stroke-width="2.6999999999999997"/>
<path d="M1016.4 532.15 V630" fill="none" stroke="#f4f4f4" stroke-width="0.9" stroke-dasharray="1.1 2.1"/>
<path d="M970 567.2 A15 15 0 0 1 985 581.2 M970 597.2 A15 15 0 0 0 985 583.2" fill="#fff" fill-opacity="0" stroke="#333" stroke-width="0.8"/>
<circle cx="970" cy="572.7" r="4.8" fill="#fff" stroke="#444" stroke-width="0.8"/><circle cx="970" cy="591.7" r="4.8" fill="#fff" stroke="#444" stroke-width="0.8"/>
<text x="970" y="574.0" font-family="Liberation Sans" font-size="3.6" fill="#333" text-anchor="middle">237</text>
<text x="970" y="593.0" font-family="Liberation Sans" font-size="3.6" fill="#333" text-anchor="middle">238</text>
<path d="M1063.7 567.2 A15 15 0 0 0 1048.7 581.2 M1063.7 597.2 A15 15 0 0 1 1048.7 583.2" fill="#fff" fill-opacity="0" stroke="#333" stroke-width="0.8"/>
<circle cx="1063.7" cy="572.7" r="4.8" fill="#fff" stroke="#444" stroke-width="0.8"/><circle cx="1063.7" cy="591.7" r="4.8" fill="#fff" stroke="#444" stroke-width="0.8"/>
<text x="1063.7" y="574.0" font-family="Liberation Sans" font-size="3.6" fill="#333" text-anchor="middle">239</text>
<text x="1063.7" y="593.0" font-family="Liberation Sans" font-size="3.6" fill="#333" text-anchor="middle">240</text>
<path d="M1108.9 630 V548.7 Q1108.9 539.7 1117.9 539.7 L1193.5 545.4 Q1202.5 545.4 1202.5 554.4 V630" fill="none" stroke="#3c3c3c" stroke-width="2.6999999999999997"/>
<path d="M1108.9 630 V548.7 Q1108.9 539.7 1117.9 539.7 L1193.5 545.4 Q1202.5 545.4 1202.5 554.4 V630" fill="none" stroke="#f4f4f4" stroke-width="0.9" stroke-dasharray="1.1 2.1"/>
<path d="M1108.9 582.2 H1202.5" fill="none" stroke="#3c3c3c" stroke-width="2.6999999999999997"/>
<path d="M1108.9 582.2 H1202.5" fill="none" stroke="#f4f4f4" stroke-width="0.9" stroke-dasharray="1.1 2.1"/>
<path d="M1155.2 542.55 V630" fill="none" stroke="#3c3c3c" stroke-width="2.6999999999999997"/>
<path d="M1155.2 542.55 V630" fill="none" stroke="#f4f4f4" stroke-width="0.9" stroke-dasharray="1.1 2.1"/>
<path d="M1108.9 567.2 A15 15 0 0 1 1123.9 581.2 M1108.9 597.2 A15 15 0 0 0 1123.9 583.2" fill="#fff" fill-opacity="0" stroke="#333" stroke-width="0.8"/>
<circle cx="1108.9" cy="572.7" r="4.8" fill="#fff" stroke="#444" stroke-width="0.8"/><circle cx="1108.9" cy="591.7" r="4.8" fill="#fff" stroke="#444" stroke-width="0.8"/>
<text x="1108.9" y="574.0" font-family="Liberation Sans" font-size="3.6" fill="#333" text-anchor="middle">241</text>
<text x="1108.9" y="593.0" font-family="Liberation Sans" font-size="3.6" fill="#333" text-anchor="middle">242</text>
<path d="M1202.5 567.2 A15 15 0 0 0 1187.5 581.2 M1202.5 597.2 A15 15 0 0 1 1187.5 583.2" fill="#fff" fill-opacity="0" stroke="#333" stroke-width="0.8"/>
<circle cx="1202.5" cy="572.7" r="4.8" fill="#fff" stroke="#444" stroke-width="0.8"/><circle cx="1202.5" cy="591.7" r="4.8" fill="#fff" stroke="#444" stroke-width="0.8"/>
<text x="1202.5" y="574.0" font-family="Liberation Sans" font-size="3.6" fill="#333" text-anchor="middle">243</text>
<text x="1202.5" y="593.0" font-family="Liberation Sans" font-size="3.6" fill="#333" text-anchor="middle">244</text>
<path d="M1386.6 630 V554.4 Q1386.6 545.4 1395.6 545.4 L1471.2 539.7 Q1480.2 539.7 1480.2 548.7 V630" fill="none" stroke="#3c3c3c" stroke-width="2.6999999999999997"/>
<path d="M1386.6 630 V554.4 Q1386.6 545.4 1395.6 545.4 L1471.2 539.7 Q1480.2 539.7 1480.2 548.7 V630" fill="none" stroke="#f4f4f4" stroke-width="0.9" stroke-dasharray="1.1 2.1"/>
<path d="M1386.6 582.2 H1480.2" fill="none" stroke="#3c3c3c" stroke-width="2.6999999999999997"/>
<path d="M1386.6 582.2 H1480.2" fill="none" stroke="#f4f4f4" stroke-width="0.9" stroke-dasharray="1.1 2.1"/>
<path d="M1433.9 542.55 V630" fill="none" stroke="#3c3c3c" stroke-width="2.6999999999999997"/>
<path d="M1433.9 542.55 V630" fill="none" stroke="#f4f4f4" stroke-width="0.9" stroke-dasharray="1.1 2.1"/>
<path d="M1386.6 567.2 A15 15 0 0 1 1401.6 581.2 M1386.6 597.2 A15 15 0 0 0 1401.6 583.2" fill="#fff" fill-opacity="0" stroke="#333" stroke-width="0.8"/>
<circle cx="1386.6" cy="572.7" r="4.8" fill="#fff" stroke="#444" stroke-width="0.8"/><circle cx="1386.6" cy="591.7" r="4.8" fill="#fff" stroke="#444" stroke-width="0.8"/>
<text x="1386.6" y="574.0" font-family="Liberation Sans" font-size="3.6" fill="#333" text-anchor="middle">245</text>
<text x="1386.6" y="593.0" font-family="Liberation Sans" font-size="3.6" fill="#333" text-anchor="middle">246</text>
<path d="M1480.2 567.2 A15 15 0 0 0 1465.2 581.2 M1480.2 597.2 A15 15 0 0 1 1465.2 583.2" fill="#fff" fill-opacity="0" stroke="#333" stroke-width="0.8"/>
<circle cx="1480.2" cy="572.7" r="4.8" fill="#fff" stroke="#444" stroke-width="0.8"/><circle cx="1480.2" cy="591.7" r="4.8" fill="#fff" stroke="#444" stroke-width="0.8"/>
<text x="1480.2" y="574.0" font-family="Liberation Sans" font-size="3.6" fill="#333" text-anchor="middle">247</text>
<text x="1480.2" y="593.0" font-family="Liberation Sans" font-size="3.6" fill="#333" text-anchor="middle">248</text>
<path d="M1526.5 630 V544 Q1526.5 535 1535 535 L1610 529.3" fill="none" stroke="#3c3c3c" stroke-width="2.6999999999999997"/>
<path d="M1526.5 630 V544 Q1526.5 535 1535 535 L1610 529.3" fill="none" stroke="#f4f4f4" stroke-width="0.9" stroke-dasharray="1.1 2.1"/>
<path d="M1526.5 582.2 H1610 M1572.8 532 V630" fill="none" stroke="#3c3c3c" stroke-width="2.6999999999999997"/>
<path d="M1526.5 582.2 H1610 M1572.8 532 V630" fill="none" stroke="#f4f4f4" stroke-width="0.9" stroke-dasharray="1.1 2.1"/>
<path d="M1526.5 567.2 A15 15 0 0 1 1541.5 581.2 M1526.5 597.2 A15 15 0 0 0 1541.5 583.2" fill="none" stroke="#333" stroke-width="0.8"/>
<circle cx="1526.5" cy="572.7" r="4.8" fill="#fff" stroke="#444" stroke-width="0.8"/><circle cx="1526.5" cy="591.7" r="4.8" fill="#fff" stroke="#444" stroke-width="0.8"/>
<text x="1526.5" y="574.0" font-family="Liberation Sans" font-size="3.6" fill="#333" text-anchor="middle">249</text>
<text x="1526.5" y="593.0" font-family="Liberation Sans" font-size="3.6" fill="#333" text-anchor="middle">250</text>
<path d="M1610 567 A15 15 0 0 0 1597 581 M1610 597 A15 15 0 0 1 1597 583" fill="none" stroke="#333" stroke-width="0.8"/>
<path d="M831 519 L746 509.5" stroke="#333" stroke-width="0.9"/>
<path d="M924.8 525 L970 529.3 M1063.7 535 L1108.9 539.7 M1480.2 539.7 L1526.5 535" stroke="#333" stroke-width="0.8" stroke-dasharray="1.3 1.3"/>
<path d="M1202.5 545.4 L1386.6 545.4" stroke="#333" stroke-width="0.8" stroke-dasharray="1.3 1.3"/>
<rect x="1198.7" y="537.8" width="191" height="103" rx="5" fill="none" stroke="#444" stroke-width="0.9" stroke-dasharray="3 2"/>
<path d="M1225 548.2 L1294 553 L1364 548.2 V568 H1225 Z" fill="none" stroke="#3c3c3c" stroke-width="2.0"/>
<path d="M1225 557 H1364 M1240 557 V568 M1350 557 V568" fill="none" stroke="#3c3c3c" stroke-width="1.7999999999999998"/>
<rect x="1260" y="559" width="70" height="6" fill="none" stroke="#333" stroke-width="0.7" stroke-dasharray="1.3 1"/><rect x="1287" y="561" width="14" height="6" fill="none" stroke="#333" stroke-width="0.8"/>
<rect x="1252.6" y="575.6" width="84.1" height="26.4" fill="none" stroke="#333" stroke-width="0.8" stroke-dasharray="1.3 1.3"/><path d="M1252.6 581 H1336.7 M1252.6 596 H1336.7" stroke="#333" stroke-width="0.7"/>
<rect x="1218.5" y="613.4" width="152.2" height="12.9" fill="none" stroke="#333" stroke-width="1"/><rect x="1218.5" y="613.4" width="12" height="12.9" fill="none" stroke="#333" stroke-width="1.6"/><rect x="1358.7" y="613.4" width="12" height="12.9" fill="none" stroke="#333" stroke-width="1.6"/>
<path d="M1390 640 L1398 650" stroke="#333" stroke-width="0.8"/><circle cx="1404.6" cy="658.8" r="9.3" fill="#fff" stroke="#333" stroke-width="0.9"/><path d="M1395.5 658.8 H1414" stroke="#333" stroke-width="0.6"/>
<text x="1404.6" y="657" font-family="Liberation Sans" font-size="3.8" fill="#333" text-anchor="middle">01</text><text x="1404.6" y="663.5" font-family="Liberation Sans" font-size="3.8" fill="#333" text-anchor="middle">A6.01</text>
<text x="740" y="249.8" font-family="Liberation Sans" font-size="7" font-weight="bold" fill="#1a1a1a" text-anchor="middle" textLength="47.2" lengthAdjust="spacingAndGlyphs" >OPEN OFFICE  200</text>
<path d="M716.4 251.4 H763.6" stroke="#1a1a1a" stroke-width="1"/>
<text x="853" y="216.3" font-family="Liberation Sans" font-size="7" font-weight="bold" fill="#1a1a1a" text-anchor="middle" textLength="35.4" lengthAdjust="spacingAndGlyphs" >MEETING  201</text>
<path d="M835.3 217.9 H870.7" stroke="#1a1a1a" stroke-width="1"/>
<text x="902" y="216.3" font-family="Liberation Sans" font-size="7" font-weight="bold" fill="#1a1a1a" text-anchor="middle" textLength="35.4" lengthAdjust="spacingAndGlyphs" >MEETING  203</text>
<path d="M884.3 217.9 H919.7" stroke="#1a1a1a" stroke-width="1"/>
<text x="855" y="272.3" font-family="Liberation Sans" font-size="7" font-weight="bold" fill="#1a1a1a" text-anchor="middle" textLength="35.4" lengthAdjust="spacingAndGlyphs" >MEETING  202</text>
<path d="M837.3 273.9 H872.7" stroke="#1a1a1a" stroke-width="1"/>
<text x="902" y="272.3" font-family="Liberation Sans" font-size="7" font-weight="bold" fill="#1a1a1a" text-anchor="middle" textLength="35.4" lengthAdjust="spacingAndGlyphs" >MEETING  204</text>
<path d="M884.3 273.9 H919.7" stroke="#1a1a1a" stroke-width="1"/>
<text x="1016" y="218.8" font-family="Liberation Sans" font-size="7" font-weight="bold" fill="#1a1a1a" text-anchor="middle" textLength="32.5" lengthAdjust="spacingAndGlyphs" >OFFICE  205</text>
<path d="M999.8 220.4 H1032.2" stroke="#1a1a1a" stroke-width="1"/>
<text x="1016" y="268.8" font-family="Liberation Sans" font-size="7" font-weight="bold" fill="#1a1a1a" text-anchor="middle" textLength="32.5" lengthAdjust="spacingAndGlyphs" >OFFICE  206</text>
<path d="M999.8 270.4 H1032.2" stroke="#1a1a1a" stroke-width="1"/>
<text x="1144" y="238.8" font-family="Liberation Sans" font-size="7" font-weight="bold" fill="#1a1a1a" text-anchor="middle" textLength="44.2" lengthAdjust="spacingAndGlyphs" >CONFERENCE  207</text>
<path d="M1121.9 240.4 H1166.1" stroke="#1a1a1a" stroke-width="1"/>
<text x="1260" y="239.3" font-family="Liberation Sans" font-size="7" font-weight="bold" fill="#1a1a1a" text-anchor="middle" textLength="35.4" lengthAdjust="spacingAndGlyphs" >MEETING  208</text>
<path d="M1242.3 240.9 H1277.7" stroke="#1a1a1a" stroke-width="1"/>
<text x="1330" y="239.3" font-family="Liberation Sans" font-size="7" font-weight="bold" fill="#1a1a1a" text-anchor="middle" textLength="35.4" lengthAdjust="spacingAndGlyphs" >MEETING  209</text>
<path d="M1312.3 240.9 H1347.7" stroke="#1a1a1a" stroke-width="1"/>
<text x="1395" y="237.3" font-family="Liberation Sans" font-size="7" font-weight="bold" fill="#1a1a1a" text-anchor="middle" textLength="35.4" lengthAdjust="spacingAndGlyphs" >MEETING  210</text>
<path d="M1377.3 238.9 H1412.7" stroke="#1a1a1a" stroke-width="1"/>
<text x="1478" y="238.3" font-family="Liberation Sans" font-size="7" font-weight="bold" fill="#1a1a1a" text-anchor="middle" textLength="44.2" lengthAdjust="spacingAndGlyphs" >CONFERENCE  211</text>
<path d="M1455.9 239.9 H1500.1" stroke="#1a1a1a" stroke-width="1"/>
<text x="1568" y="219.8" font-family="Liberation Sans" font-size="7" font-weight="bold" fill="#1a1a1a" text-anchor="middle" textLength="32.5" lengthAdjust="spacingAndGlyphs" >OFFICE  212</text>
<path d="M1551.8 221.4 H1584.2" stroke="#1a1a1a" stroke-width="1"/>
<text x="1568" y="268.8" font-family="Liberation Sans" font-size="7" font-weight="bold" fill="#1a1a1a" text-anchor="middle" textLength="32.5" lengthAdjust="spacingAndGlyphs" >OFFICE  213</text>
<path d="M1551.8 270.4 H1584.2" stroke="#1a1a1a" stroke-width="1"/>
<text x="1297" y="308.8" font-family="Liberation Sans" font-size="7" font-weight="bold" fill="#1a1a1a" text-anchor="middle" textLength="41.3" lengthAdjust="spacingAndGlyphs" >RECEPTION  255</text>
<path d="M1276.3 310.4 H1317.6" stroke="#1a1a1a" stroke-width="1"/>
<text x="701" y="341.8" font-family="Liberation Sans" font-size="7" font-weight="bold" fill="#1a1a1a" text-anchor="middle" textLength="35.4" lengthAdjust="spacingAndGlyphs" >MEETING  247</text>
<path d="M683.3 343.4 H718.7" stroke="#1a1a1a" stroke-width="1"/>
<text x="704" y="415.8" font-family="Liberation Sans" font-size="7" font-weight="bold" fill="#1a1a1a" text-anchor="middle" textLength="44.2" lengthAdjust="spacingAndGlyphs" >CONFERENCE  246</text>
<path d="M681.9 417.4 H726.1" stroke="#1a1a1a" stroke-width="1"/>
<text x="706" y="486.8" font-family="Liberation Sans" font-size="7" font-weight="bold" fill="#1a1a1a" text-anchor="middle" textLength="35.4" lengthAdjust="spacingAndGlyphs" >MEETING  245</text>
<path d="M688.3 488.4 H723.7" stroke="#1a1a1a" stroke-width="1"/>
<text x="907" y="415.3" font-family="Liberation Sans" font-size="7" font-weight="bold" fill="#1a1a1a" text-anchor="middle" textLength="47.2" lengthAdjust="spacingAndGlyphs" >OPEN OFFICE  248</text>
<path d="M883.4 416.9 H930.6" stroke="#1a1a1a" stroke-width="1"/>
<text x="1057" y="381.8" font-family="Liberation Sans" font-size="7" font-weight="bold" fill="#1a1a1a" text-anchor="middle" textLength="32.5" lengthAdjust="spacingAndGlyphs" >OFFICE  249</text>
<path d="M1040.8 383.4 H1073.2" stroke="#1a1a1a" stroke-width="1"/>
<text x="1055" y="442.8" font-family="Liberation Sans" font-size="7" font-weight="bold" fill="#1a1a1a" text-anchor="middle" textLength="26.6" lengthAdjust="spacingAndGlyphs" >COPY  250</text>
<path d="M1041.7 444.4 H1068.3" stroke="#1a1a1a" stroke-width="1"/>
<text x="1109" y="361.3" font-family="Liberation Sans" font-size="7" font-weight="bold" fill="#1a1a1a" text-anchor="middle" textLength="29.5" lengthAdjust="spacingAndGlyphs" >STAIR  251</text>
<path d="M1094.2 362.9 H1123.8" stroke="#1a1a1a" stroke-width="1"/>
<text x="1162" y="361.3" font-family="Liberation Sans" font-size="7" font-weight="bold" fill="#1a1a1a" text-anchor="middle" textLength="44.2" lengthAdjust="spacingAndGlyphs" >ELECTRICAL  253</text>
<path d="M1139.9 362.9 H1184.1" stroke="#1a1a1a" stroke-width="1"/>
<text x="1169" y="396.8" font-family="Liberation Sans" font-size="7" font-weight="bold" fill="#1a1a1a" text-anchor="middle" textLength="38.4" lengthAdjust="spacingAndGlyphs" >STORAGE  253A</text>
<path d="M1149.8 398.4 H1188.2" stroke="#1a1a1a" stroke-width="1"/>
<text x="1162" y="415.8" font-family="Liberation Sans" font-size="7" font-weight="bold" fill="#1a1a1a" text-anchor="middle" textLength="38.4" lengthAdjust="spacingAndGlyphs" >STORAGE  254A</text>
<path d="M1142.8 417.4 H1181.2" stroke="#1a1a1a" stroke-width="1"/>
<text x="1181" y="466.8" font-family="Liberation Sans" font-size="7" font-weight="bold" fill="#1a1a1a" text-anchor="middle" textLength="44.2" lengthAdjust="spacingAndGlyphs" >WOMEN'S RR  254</text>
<path d="M1158.9 468.4 H1203.1" stroke="#1a1a1a" stroke-width="1"/>
<text x="1294" y="407.8" font-family="Liberation Sans" font-size="7" font-weight="bold" fill="#1a1a1a" text-anchor="middle" textLength="29.5" lengthAdjust="spacingAndGlyphs" >LOBBY  256</text>
<path d="M1279.2 409.4 H1308.8" stroke="#1a1a1a" stroke-width="1"/>
<text x="1426" y="346.3" font-family="Liberation Sans" font-size="7" font-weight="bold" fill="#1a1a1a" text-anchor="middle" textLength="32.5" lengthAdjust="spacingAndGlyphs" >SERVER  257</text>
<path d="M1409.8 347.9 H1442.2" stroke="#1a1a1a" stroke-width="1"/>
<text x="1419" y="419.8" font-family="Liberation Sans" font-size="7" font-weight="bold" fill="#1a1a1a" text-anchor="middle" textLength="38.4" lengthAdjust="spacingAndGlyphs" >STORAGE  258A</text>
<path d="M1399.8 421.4 H1438.2" stroke="#1a1a1a" stroke-width="1"/>
<text x="1410" y="467.8" font-family="Liberation Sans" font-size="7" font-weight="bold" fill="#1a1a1a" text-anchor="middle" textLength="38.4" lengthAdjust="spacingAndGlyphs" >MEN'S RR  258</text>
<path d="M1390.8 469.4 H1429.2" stroke="#1a1a1a" stroke-width="1"/>
<text x="1478" y="466.8" font-family="Liberation Sans" font-size="7" font-weight="bold" fill="#1a1a1a" text-anchor="middle" textLength="29.5" lengthAdjust="spacingAndGlyphs" >STAIR  259</text>
<path d="M1463.2 468.4 H1492.8" stroke="#1a1a1a" stroke-width="1"/>
<text x="1533" y="380.3" font-family="Liberation Sans" font-size="7" font-weight="bold" fill="#1a1a1a" text-anchor="middle" textLength="32.5" lengthAdjust="spacingAndGlyphs" >OFFICE  261</text>
<path d="M1516.8 381.9 H1549.2" stroke="#1a1a1a" stroke-width="1"/>
<text x="1531" y="442.8" font-family="Liberation Sans" font-size="7" font-weight="bold" fill="#1a1a1a" text-anchor="middle" textLength="26.6" lengthAdjust="spacingAndGlyphs" >COPY  262</text>
<path d="M1517.7 444.4 H1544.3" stroke="#1a1a1a" stroke-width="1"/>
<text x="740" y="569.3" font-family="Liberation Sans" font-size="7" font-weight="bold" fill="#1a1a1a" text-anchor="middle" textLength="47.2" lengthAdjust="spacingAndGlyphs" >OPEN OFFICE  244</text>
<path d="M716.4 570.9 H763.6" stroke="#1a1a1a" stroke-width="1"/>
<text x="876" y="549.3" font-family="Liberation Sans" font-size="7" font-weight="bold" fill="#1a1a1a" text-anchor="middle" textLength="32.5" lengthAdjust="spacingAndGlyphs" >OFFICE  242</text>
<path d="M859.8 550.9 H892.2" stroke="#1a1a1a" stroke-width="1"/>
<text x="876" y="601.8" font-family="Liberation Sans" font-size="7" font-weight="bold" fill="#1a1a1a" text-anchor="middle" textLength="32.5" lengthAdjust="spacingAndGlyphs" >OFFICE  243</text>
<path d="M859.8 603.4 H892.2" stroke="#1a1a1a" stroke-width="1"/>
<text x="993" y="556.8" font-family="Liberation Sans" font-size="7" font-weight="bold" fill="#1a1a1a" text-anchor="middle" textLength="32.5" lengthAdjust="spacingAndGlyphs" >OFFICE  240</text>
<path d="M976.8 558.4 H1009.2" stroke="#1a1a1a" stroke-width="1"/>
<text x="1041" y="556.8" font-family="Liberation Sans" font-size="7" font-weight="bold" fill="#1a1a1a" text-anchor="middle" textLength="32.5" lengthAdjust="spacingAndGlyphs" >OFFICE  238</text>
<path d="M1024.8 558.4 H1057.2" stroke="#1a1a1a" stroke-width="1"/>
<text x="993" y="606.8" font-family="Liberation Sans" font-size="7" font-weight="bold" fill="#1a1a1a" text-anchor="middle" textLength="32.5" lengthAdjust="spacingAndGlyphs" >OFFICE  241</text>
<path d="M976.8 608.4 H1009.2" stroke="#1a1a1a" stroke-width="1"/>
<text x="1040" y="606.8" font-family="Liberation Sans" font-size="7" font-weight="bold" fill="#1a1a1a" text-anchor="middle" textLength="32.5" lengthAdjust="spacingAndGlyphs" >OFFICE  239</text>
<path d="M1023.8 608.4 H1056.2" stroke="#1a1a1a" stroke-width="1"/>
<text x="1132" y="564.3" font-family="Liberation Sans" font-size="7" font-weight="bold" fill="#1a1a1a" text-anchor="middle" textLength="32.5" lengthAdjust="spacingAndGlyphs" >OFFICE  236</text>
<path d="M1115.8 565.9 H1148.2" stroke="#1a1a1a" stroke-width="1"/>
<text x="1178" y="564.3" font-family="Liberation Sans" font-size="7" font-weight="bold" fill="#1a1a1a" text-anchor="middle" textLength="35.4" lengthAdjust="spacingAndGlyphs" >MEETING  234</text>
<path d="M1160.3 565.9 H1195.7" stroke="#1a1a1a" stroke-width="1"/>
<text x="1132" y="610.8" font-family="Liberation Sans" font-size="7" font-weight="bold" fill="#1a1a1a" text-anchor="middle" textLength="32.5" lengthAdjust="spacingAndGlyphs" >OFFICE  237</text>
<path d="M1115.8 612.4 H1148.2" stroke="#1a1a1a" stroke-width="1"/>
<text x="1178" y="610.8" font-family="Liberation Sans" font-size="7" font-weight="bold" fill="#1a1a1a" text-anchor="middle" textLength="35.4" lengthAdjust="spacingAndGlyphs" >MEETING  235</text>
<path d="M1160.3 612.4 H1195.7" stroke="#1a1a1a" stroke-width="1"/>
<text x="1292" y="590.3" font-family="Liberation Sans" font-size="7" font-weight="bold" fill="#1a1a1a" text-anchor="middle" textLength="29.5" lengthAdjust="spacingAndGlyphs" >BREAK  233</text>
<path d="M1277.2 591.9 H1306.8" stroke="#1a1a1a" stroke-width="1"/>
<text x="1413" y="564.3" font-family="Liberation Sans" font-size="7" font-weight="bold" fill="#1a1a1a" text-anchor="middle" textLength="35.4" lengthAdjust="spacingAndGlyphs" >MEETING  231</text>
<path d="M1395.3 565.9 H1430.7" stroke="#1a1a1a" stroke-width="1"/>
<text x="1455" y="564.3" font-family="Liberation Sans" font-size="7" font-weight="bold" fill="#1a1a1a" text-anchor="middle" textLength="32.5" lengthAdjust="spacingAndGlyphs" >OFFICE  229</text>
<path d="M1438.8 565.9 H1471.2" stroke="#1a1a1a" stroke-width="1"/>
<text x="1413" y="605.8" font-family="Liberation Sans" font-size="7" font-weight="bold" fill="#1a1a1a" text-anchor="middle" textLength="35.4" lengthAdjust="spacingAndGlyphs" >MEETING  232</text>
<path d="M1395.3 607.4 H1430.7" stroke="#1a1a1a" stroke-width="1"/>
<text x="1457" y="605.8" font-family="Liberation Sans" font-size="7" font-weight="bold" fill="#1a1a1a" text-anchor="middle" textLength="32.5" lengthAdjust="spacingAndGlyphs" >OFFICE  230</text>
<path d="M1440.8 607.4 H1473.2" stroke="#1a1a1a" stroke-width="1"/>
<text x="1550" y="548.3" font-family="Liberation Sans" font-size="7" font-weight="bold" fill="#1a1a1a" text-anchor="middle" textLength="32.5" lengthAdjust="spacingAndGlyphs" >OFFICE  227</text>
<path d="M1533.8 549.9 H1566.2" stroke="#1a1a1a" stroke-width="1"/>
<text x="1595" y="548.3" font-family="Liberation Sans" font-size="7" font-weight="bold" fill="#1a1a1a" text-anchor="middle" textLength="29.5" lengthAdjust="spacingAndGlyphs" >OFFICE  22</text>
<path d="M1580.2 549.9 H1609.8" stroke="#1a1a1a" stroke-width="1"/>
<text x="1550" y="607.8" font-family="Liberation Sans" font-size="7" font-weight="bold" fill="#1a1a1a" text-anchor="middle" textLength="32.5" lengthAdjust="spacingAndGlyphs" >OFFICE  228</text>
<path d="M1533.8 609.4 H1566.2" stroke="#1a1a1a" stroke-width="1"/>
<text x="1595" y="607.8" font-family="Liberation Sans" font-size="7" font-weight="bold" fill="#1a1a1a" text-anchor="middle" textLength="29.5" lengthAdjust="spacingAndGlyphs" >OFFICE  22</text>
<path d="M1580.2 609.4 H1609.8" stroke="#1a1a1a" stroke-width="1"/>
<text x="1016" y="229.5" font-family="Liberation Sans" font-size="6.2" fill="#e83a30" text-anchor="middle">204.616 sf</text>
<text x="1016" y="277.5" font-family="Liberation Sans" font-size="6.2" fill="#c87040" text-anchor="middle">193.615 sf</text>
<text x="1148" y="248" font-family="Liberation Serif" font-size="6.5" fill="#333" text-anchor="middle">23.152 sq m</text>
<text x="1295.5" y="266.5" font-family="Liberation Serif" font-size="9" font-weight="bold" fill="#e02030" text-anchor="middle">Room 001</text>
<path d="M1293.5 246 V256" stroke="#e02030" stroke-width="0.8"/>
<text transform="translate(1104 456) rotate(-90)" font-family="Liberation Sans" font-size="4.8" font-weight="bold" fill="#222" text-anchor="middle">MOTHER'S RM  252</text>
<text transform="translate(1481 372) rotate(-90)" font-family="Liberation Sans" font-size="4.8" font-weight="bold" fill="#222" text-anchor="middle">STORAGE  260</text>
<path d="M586 866 H1610 M586 964 H1610" stroke="#444" stroke-width="1.1"/>
<path d="M956.6 866 V964" stroke="#444" stroke-width="1.1"/>
<path d="M1075.9 866 V964" stroke="#444" stroke-width="1.1"/>
<path d="M1195.2 866 V964" stroke="#444" stroke-width="1.1"/>
<path d="M1314.5 866 V964" stroke="#444" stroke-width="1.1"/>
<path d="M1434.8 866 V964" stroke="#444" stroke-width="1.1"/>
<path d="M1553.7 866 V964" stroke="#444" stroke-width="1.1"/>
<rect x="592" y="872" width="158.6" height="85" fill="none" stroke="#4f8090" stroke-width="1.3"/><rect x="595" y="875" width="152.6" height="79" fill="none" stroke="#4f8090" stroke-width="0.8"/>
<text x="674.5" y="906.5" font-family="Liberation Sans" font-size="18" font-weight="bold" fill="#2f5a68" text-anchor="middle" letter-spacing="8.4" stroke="#2f5a68" stroke-width="0.5" transform="translate(671.5 0) scale(0.78 1) translate(-671.5 0)">BRIGHTER</text>
<text x="674.5" y="924.7" font-family="Liberation Sans" font-size="18" font-weight="bold" fill="#2f5a68" text-anchor="middle" letter-spacing="8.4" stroke="#2f5a68" stroke-width="0.5" transform="translate(671.5 0) scale(0.78 1) translate(-671.5 0)">GRAPHICS</text>
<text x="671" y="937" font-family="Liberation Sans" font-size="3.9" font-weight="bold" fill="#2f5a68" text-anchor="middle" letter-spacing="0.7">DIGITISING CONSTRUCTION SINCE 2003</text>
<path d="M759.2 893 H767 V923 H789 V900.5 H770.5 V893 H796 V930.5 H759.2 Z" fill="#1a80d6"/><rect x="771.5" y="905" width="13" height="13" fill="#1a80d6"/>
<text x="805.5" y="923.7" font-family="Liberation Sans" font-size="32.5" font-weight="bold" fill="#1a80d6" textLength="138" lengthAdjust="spacingAndGlyphs">BLUEBEAM</text>
<text x="805.5" y="937.5" font-family="Liberation Sans" font-size="9.2" font-weight="bold" fill="#222">Platinum Partner</text>
<text x="966.6" y="878.8" font-family="Liberation Sans" font-size="9.7" font-weight="bold" fill="#111">Capture Engineers</text>
<text x="966.6" y="889.8" font-family="Liberation Sans" font-size="9.7"  fill="#111">Mechanical</text>
<text x="966.6" y="900.8" font-family="Liberation Sans" font-size="9.7"  fill="#111">Electrical</text>
<text x="966.6" y="911.8" font-family="Liberation Sans" font-size="9.7"  fill="#111">Plumbing</text>
<text x="966.6" y="933.8" font-family="Liberation Sans" font-size="9.7"  fill="#111">1234 Miller St.</text>
<text x="966.6" y="944.8" font-family="Liberation Sans" font-size="9.7"  fill="#111">Manchester, NH 06930</text>
<text x="1089.6" y="878.8" font-family="Liberation Sans" font-size="9.7" font-weight="bold" fill="#111">REVU ARCHITECTS</text>
<text x="1089.6" y="900.9" font-family="Liberation Sans" font-size="9.7"  fill="#111">5555 N. Broad St</text>
<text x="1089.6" y="911.9" font-family="Liberation Sans" font-size="9.7"  fill="#111">Pasadena CA 91101</text>
<text x="1204.5" y="878.8" font-family="Liberation Sans" font-size="9.7" font-weight="bold" fill="#111">OFFICE BUILDING</text>
<text x="1204.5" y="900.9" font-family="Liberation Sans" font-size="9.7"  fill="#111">Project No: 323232</text>
<text x="1204.5" y="922.9" font-family="Liberation Sans" font-size="9.7"  fill="#111">Project Address:</text>
<text x="1204.5" y="933.9" font-family="Liberation Sans" font-size="9.7"  fill="#111">123 Schonsett St</text>
<text x="1204.5" y="944.9" font-family="Liberation Sans" font-size="9.7"  fill="#111">Chicago, IL 60601</text>
<text x="1321" y="879" font-family="Liberation Sans" font-size="4.6" font-weight="bold" fill="#222">LEGAL DISCLAIMER:</text>
<text x="1321" y="890.0" font-family="Liberation Sans" font-size="4.6" fill="#333" textLength="108.0" lengthAdjust="spacingAndGlyphs">ALL IDEAS, DESIGNS, AND PLANS INDICATED</text>
<text x="1321" y="895.6" font-family="Liberation Sans" font-size="4.6" fill="#333" textLength="88.6" lengthAdjust="spacingAndGlyphs">OR REPRESENTED BY THESE DRAWINGS</text>
<text x="1321" y="901.2" font-family="Liberation Sans" font-size="4.6" fill="#333" textLength="91.4" lengthAdjust="spacingAndGlyphs">ARE OWNED AND ARE THE PROPERTY OF</text>
<text x="1321" y="906.8" font-family="Liberation Sans" font-size="4.6" fill="#333" textLength="97.0" lengthAdjust="spacingAndGlyphs">BLUEBEAM, INC. AND WERE CREATED AND</text>
<text x="1321" y="912.4" font-family="Liberation Sans" font-size="4.6" fill="#333" textLength="74.8" lengthAdjust="spacingAndGlyphs">DEVELOPED FOR DEMONSTRATION</text>
<text x="1321" y="918.0" font-family="Liberation Sans" font-size="4.6" fill="#333" textLength="94.2" lengthAdjust="spacingAndGlyphs">PURPOSES ONLY. NONE OF SUCH IDEAS,</text>
<text x="1321" y="923.6" font-family="Liberation Sans" font-size="4.6" fill="#333" textLength="97.0" lengthAdjust="spacingAndGlyphs">DESIGNS, OR PLANS SHALL BE USED FOR</text>
<text x="1321" y="929.2" font-family="Liberation Sans" font-size="4.6" fill="#333" textLength="94.2" lengthAdjust="spacingAndGlyphs">ANY PURPOSE WHATSOEVER EXCEPT AS A</text>
<text x="1321" y="934.8" font-family="Liberation Sans" font-size="4.6" fill="#333" textLength="80.3" lengthAdjust="spacingAndGlyphs">DEMONSTRATION SET WITHOUT THE</text>
<text x="1321" y="940.4" font-family="Liberation Sans" font-size="4.6" fill="#333" textLength="77.6" lengthAdjust="spacingAndGlyphs">EXPRESSED WRITTEN CONCENT OF</text>
<text x="1321" y="946.0" font-family="Liberation Sans" font-size="4.6" fill="#333" textLength="38.8" lengthAdjust="spacingAndGlyphs">BLUEBEAM, INC.</text>
<text x="1447" y="872.5" font-family="Liberation Sans" font-size="4.2" fill="#333">DATE</text><text x="1540" y="872.5" font-family="Liberation Sans" font-size="4.2" fill="#333" text-anchor="end">03/04/2018</text>
<text x="1447" y="879" font-family="Liberation Sans" font-size="4.2" fill="#333">ISSUED FOR:</text><text x="1540" y="879" font-family="Liberation Sans" font-size="4.2" fill="#333" text-anchor="end">INTERNAL REVIEW</text>
<text x="1447" y="891" font-family="Liberation Sans" font-size="4.2" fill="#333">PROJECT</text><text x="1540" y="891" font-family="Liberation Sans" font-size="4.2" fill="#333" text-anchor="end">3232</text>
<text x="1447" y="897.5" font-family="Liberation Sans" font-size="4.2" fill="#333">DRAWN BY:</text><text x="1540" y="897.5" font-family="Liberation Sans" font-size="4.2" fill="#333" text-anchor="end">Author</text>
<text x="1447" y="903.5" font-family="Liberation Sans" font-size="4.2" fill="#333">CHECKED BY:</text><text x="1540" y="903.5" font-family="Liberation Sans" font-size="4.2" fill="#333" text-anchor="end">Checker</text>
<text x="1447" y="909.5" font-family="Liberation Sans" font-size="4.2" fill="#333">APPROVED BY:</text><text x="1540" y="909.5" font-family="Liberation Sans" font-size="4.2" fill="#333" text-anchor="end">Approver</text>
<path d="M1447 873.5 H1540.4 M1447 887.5 H1540.4 M1447 892 H1540.4 M1447 898.5 H1540.4 M1447 904.5 H1540.4 M1447 910.5 H1540.4" stroke="#333" stroke-width="0.7"/>
<rect x="1447" y="913" width="93.4" height="6" fill="none" stroke="#222" stroke-width="0.9"/><path d="M1470 913 V919 M1493 913 V919" stroke="#222" stroke-width="0.7"/><text x="1458.5" y="917.8" font-family="Liberation Sans" font-size="3.6" fill="#333" text-anchor="middle">#</text><text x="1481.5" y="917.8" font-family="Liberation Sans" font-size="3.6" fill="#333" text-anchor="middle">DATE</text><text x="1516.7" y="917.8" font-family="Liberation Sans" font-size="3.6" fill="#333" text-anchor="middle">DESCRIPTION</text>
<text x="1584" y="906.4" font-family="Liberation Sans" font-size="11.3" font-weight="bold" fill="#111">NOT FOR</text>
<text x="1562.3" y="921" font-family="Liberation Sans" font-size="11.3" font-weight="bold" fill="#111">CONSTRUCTION</text>
</g></svg><!--/PLAN-->
<div class="a" style="left:1610px;top:106px;width:19px;height:874px;background:#efefef"></div>
<div class="a" style="left:1615px;top:307px;width:9px;height:645px;background:#8a8a8a"></div>

<!-- right strip -->
<div class="a" style="left:1629px;top:66px;width:46px;height:954px;background:#2d2d2d"></div>


<svg style="left:1629px;top:66px" width="46" height="880" viewBox="1629 66 46 880">
<path d="M1632 71.5 H1666" stroke="#bdbdbd" stroke-width="1.3" stroke-dasharray="1.5 1.5"/>
<g class="ic">
<path d="M1638.6 105.4 L1658.8 85.7"/>
<path d="M1638.6 145.8 L1653 131.5"/>
<path d="M1638.6 186.6 C1640 175 1648 167 1659 166.2"/>
<path d="M1638.6 226.3 L1643 215 L1648.5 220.6 L1650.5 209.3 L1655 213.8 L1659 205.9"/>
<path d="M1638.5 254.6 H1659 M1640.5 250 V259.5 M1657 250 V259.5 M1638 252 L1643 257 M1654 252 L1659 257" style="stroke-width:1.3"/>
<rect x="1638.5" y="289" width="20.5" height="16.6"/>
<ellipse cx="1648.6" cy="337" rx="10.3" ry="7.3"/>
<path d="M1638.5 367.6 H1659 L1650 377.8 L1659 388 H1638.5 Z"/>
<path d="M1643 419 L1651 410.5 H1658 V428 H1643"/>
<path d="M1642.5 468.5 V455.5 L1650 448.5 H1659.5 V468.5 Z"/>
<path d="M1642 498 H1659 M1641.5 492 V505 M1659.5 492 V505"/>
<path d="M1644 531.5 V548 M1648 531.5 V548 M1652 531.5 V548 M1656 531.5 V548 M1641 547 L1660 537" style="stroke-width:1.7"/>
</g>
<path d="M1653.5 125.5 L1659 125.3 L1658.8 131 Z M1651 129 L1659 125.3 L1655.5 133" fill="#e6e6e6" stroke="#e6e6e6" stroke-width="1.5"/>
<g fill="#fff"><rect x="1641" y="417" width="4" height="4"/><rect x="1641" y="426" width="4" height="4"/><rect x="1649" y="408.5" width="4" height="4"/><rect x="1656" y="408.5" width="4" height="4"/><rect x="1656" y="426" width="4" height="4"/></g>
<path d="M1645 498 L1647.5 495.5 V500.5 Z M1656 498 L1653.5 495.5 V500.5 Z" fill="#fff"/>
<g stroke="#7557b0" fill="none">
<path d="M1637.5 404.5 V432 M1637.5 405 H1660" stroke-width="1.6"/>
<path d="M1637.5 444.5 V472 M1637.5 445 H1660" stroke-width="1.6"/>
<path d="M1637.5 485 V512.5 M1637.5 485.5 H1660" stroke-width="1.6"/>
<path d="M1637.5 525.5 V553 M1637.5 526 H1660" stroke-width="1.6"/>
<path d="M1641 403 V407 M1645 403 V407 M1649 403 V407 M1653 403 V407 M1657 403 V407 M1636 409 H1640 M1636 413 H1640 M1636 417 H1640 M1636 421 H1640 M1636 425 H1640 M1636 429 H1640" stroke-width="1.1"/>
<path d="M1641 443 V447 M1645 443 V447 M1649 443 V447 M1653 443 V447 M1657 443 V447 M1636 449 H1640 M1636 453 H1640 M1636 457 H1640 M1636 461 H1640 M1636 465 H1640 M1636 469 H1640" stroke-width="1.1"/>
<path d="M1641 483.5 V487.5 M1645 483.5 V487.5 M1649 483.5 V487.5 M1653 483.5 V487.5 M1657 483.5 V487.5 M1636 489.5 H1640 M1636 493.5 H1640 M1636 497.5 H1640 M1636 501.5 H1640 M1636 505.5 H1640 M1636 509.5 H1640" stroke-width="1.1"/>
<path d="M1641 524 V528 M1645 524 V528 M1649 524 V528 M1653 524 V528 M1657 524 V528 M1636 530 H1640 M1636 534 H1640 M1636 538 H1640 M1636 542 H1640 M1636 546 H1640 M1636 550 H1640" stroke-width="1.1"/>
</g>
<path d="M1632 564.5 H1672" stroke="#bdbdbd" stroke-width="1.3" stroke-dasharray="1.5 1.5"/>
<g class="ic">
<rect x="1642" y="578" width="20.5" height="20"/>
</g>
<text x="1652.3" y="593.5" font-family="Liberation Sans" font-size="13" fill="#eee" text-anchor="middle">A</text>
<path d="M1642 638 L1647 630 L1653 635 Z M1647 630 L1654 622 L1663 630 L1653 635 M1650 627 L1652 619.5 M1658 632 L1664 629" fill="none" stroke="#d1a93a" stroke-width="1.6"/>
<path d="M1642 638.5 H1651 L1647 631 Z" fill="#fff"/>
<path d="M1643 679 L1647 673 L1650 676 Z M1647 673 L1651 665 L1655 669 L1650 676 M1651 665 L1656 658 M1655 669 L1662 666" fill="none" stroke="#2b88d8" stroke-width="1.7"/>
<path d="M1641.5 680 L1646 674 L1649.5 677 Z" fill="#fff"/>
<g class="ic">
<path d="M1642 699 H1658 V708 H1642 Z M1658 708 L1662 713"/>
<path d="M1642 717 C1642 713 1645.5 713 1645.5 717 C1645.5 713 1649 713 1649 717 C1649 713 1652.5 713 1652.5 717 C1652.5 713 1656 713 1656 717 C1656 713 1659.5 713 1659.5 717 C1660 714 1662 714 1663 716"/>
<path d="M1648 739 C1651 736 1654 737 1654 740 C1658 739 1660 742 1658 745 C1661 747 1661 751 1657 752 C1658 756 1654 758 1652 755 C1649 759 1645 758 1645 754 C1641 755 1639 751 1642 748 C1639 745 1641 741 1645 742 C1645 739 1647 738 1648 739 Z"/>
<path d="M1642 779 H1658 V788 H1642 Z M1658 788 L1662 792 L1655 800"/>
<path d="M1644 821.5 C1643 818 1650 818 1648.5 821.5 L1647.5 826 H1658 V831 H1638.5 V826 H1645 Z M1638.5 836 H1659" style="stroke-width:1.6"/>
<path d="M1664 828.5 L1667.5 832 L1671 828.5" style="stroke-width:1.3"/>
<rect x="1642" y="861" width="20.5" height="18.5"/>
<path d="M1642.5 876 L1648 869 L1652 873 L1656.5 867 L1662 872"/>
</g>
<circle cx="1649.5" cy="866" r="1.5" fill="#eee"/>
<path d="M1655 790 L1652.5 799.5 L1660 796 Z" fill="#eee"/>
<path d="M1645.5 902 H1664 V922 H1645.5 Z" fill="none" stroke="#eee" stroke-width="1.6" stroke-dasharray="2.5 2.5"/>
<path d="M1641 902 H1650 M1645.5 898 V907" stroke="#eee" stroke-width="1.6"/>
</svg>

<!-- bottom nav bar -->
<div class="a" style="left:509px;top:980px;width:1122px;height:40px;background:#2e2e2e"></div>
<!-- status bar -->
<div class="a" style="left:0;top:1020px;width:1675px;height:2px;background:#111"></div>
<div class="a" style="left:0;top:1022px;width:1675px;height:36px;background:#2f2f2f"></div>
<div class="a" style="left:716px;top:980px;width:41px;height:40px;background:#1b5a8d"></div>
<div class="a" style="left:1303px;top:980px;width:13px;height:40px;background:#353535"></div>
<svg style="left:509px;top:980px" width="810" height="40" viewBox="509 980 810 40">
<rect x="518.5" y="989.5" width="19.5" height="19.5" fill="none" stroke="#6a6a6a" stroke-width="1.4"/>
<g class="ic">
<rect x="558.5" y="989.5" width="20" height="19.5"/><path d="M558.5 994 H578.5 M568.5 994 V1009"/>
<rect x="598.5" y="989.5" width="20" height="19.5"/><path d="M598.5 993.5 H618.5 M598.5 999.5 H618.5 M598.5 1003 H618.5"/>
<path d="M646 989.5 H656.5 L662.5 995.5 V1009 H646 Z M656.5 989.5 V995.5 H662.5"/>
<path d="M654 995.5 V1006.5 M648.5 1001 H659.5 M652 997.5 L654 995.5 L656 997.5 M652 1004.5 L654 1006.5 L656 1004.5 M650.5 999 L648.5 1001 L650.5 1003 M657.5 999 L659.5 1001 L657.5 1003" style="stroke-width:1.2"/>
<path d="M686 989.5 H703 M686 989.5 V995 M703 989.5 V995 M688 1000 H697 L701 1004 V1009 M686 1007 H703 M686 1003 V1011 M703 1003 V1011" style="stroke-width:1.4"/>
<path d="M771 989 L783.5 1000.5 L778 1001.5 L781 1008 L778.5 1009 L775.5 1002.5 L771 1006 Z" style="stroke-width:1.4"/>
<path d="M808 989.5 H814 M811 989.5 V1009.5 M808 1009.5 H814" style="stroke-width:1.4"/>
<circle cx="855" cy="997" r="7.5"/><path d="M860.5 1002.5 L868.5 1010.5 M851.5 999.5 H858.5 M851.5 995 H858.5 M855 991.5 V998.5" style="stroke-width:1.3"/>
<path d="M1244.5 989.5" />
</g>
<path d="M730 1009 C727 1005 724 1001 726 999 C727.5 998 729 999.5 730 1001 V991.5 C730 989.5 732.5 989.5 732.5 991.5 V998 V989.5 C732.5 987.5 735.5 987.5 735.5 989.5 V998 V990 C735.5 988 738.5 988 738.5 990 V998 V992 C738.5 990 741.5 990 741.5 992 V1002 C741.5 1006 739 1009 736 1009 Z" fill="none" stroke="#fff" stroke-width="1.4"/>
<text x="815" y="1007" font-family="Liberation Sans" font-size="12" fill="#e6e6e6">A</text>
<path d="M891.5 993 V1005 M893 999 L902.5 993.5 V1004.5 Z" fill="none" stroke="#5a5a5a" stroke-width="1.3"/>
<path d="M941.5 993 V1005 L934 999 Z" fill="none" stroke="#5a5a5a" stroke-width="1.3"/>
<path d="M1262.5 993 V1005 L1270 999 Z" fill="none" stroke="#5a5a5a" stroke-width="1.3"/>
<path d="M632 990 V1009" stroke="#6a6a6a" stroke-width="1.4"/>
<path d="M1304 996.5 L1309.5 1002 L1315 996.5" class="ic" style="stroke-width:1.5"/>
</svg>
<div class="a" style="left:960px;top:989px;width:285px;height:22px;border:1.4px solid #7a7a7a;border-radius:3px"></div>
<div class="t" style="left:1047.5px;top:993.1px;font-size:14px;color:#eaeaea;">Floor Plan (1 of 1)</div>
<div class="t" style="left:1350.5px;top:992.1px;font-size:15.2px;color:#eaeaea;">106.68 x 76.20 cm</div>
<div class="t" style="left:1499px;top:992.2px;font-size:15.1px;color:#eaeaea;">9.525 cm = 30'-0"</div>
<div class="t" style="left:1px;top:1033.5px;font-size:14.2px;color:#eaeaea;">Ready</div>
<div class="a" style="left:1089px;top:1021px;width:39px;height:37px;background:#1b5a8d"></div>
<div class="a" style="left:1128px;top:1021px;width:40px;height:37px;background:#1b5a8d"></div>
<div class="a" style="left:1128px;top:1021px;width:1px;height:37px;background:#2a4d6d"></div>
<svg style="left:1010px;top:1021px" width="270" height="37" viewBox="1010 1021 270 37">
<g class="ic" style="stroke-width:1.6">
<path d="M1018 1036 H1037 M1018 1044 H1037 M1023 1030.5 V1050 M1031 1030.5 V1050"/>
<path d="M1057 1036 H1075 M1057 1044 H1066 M1061 1030.5 V1050 M1068.5 1030.5 V1038"/>
<path d="M1068 1041 H1073 C1079 1041 1079 1050 1073 1050 H1068 L1070.5 1047.5 M1068 1050 L1070.5 1052.5"/>
<path d="M1100 1031 H1108 L1112 1035 V1036 M1100 1031 V1050 H1104"/>
<path d="M1106.5 1040 H1112 C1118 1040 1118 1050 1112 1050 H1107 L1109.5 1047.5 M1107 1050 L1109.5 1052.5"/>
<path d="M1138 1049 L1142 1043 L1146.5 1035 L1151 1032 M1142 1043 L1146 1046 M1150 1040 H1154 C1160 1040 1160 1050 1154 1050 H1150 L1152.5 1047.5"/>
<path d="M1178 1049 L1183 1042 L1190 1034.5 L1194.5 1038 L1187 1046 Z M1190 1034.5 L1193 1031"/>
<rect x="1218.5" y="1030.5" width="22.5" height="19.5"/>
<path d="M1222 1037 H1236 L1233 1034 M1237 1043 H1223 L1226 1046"/>
<path d="M1252.5 1038 L1257.5 1043 L1262.5 1038" style="stroke-width:1.4"/>
</g>
<path d="M1199 1042 A5 5 0 1 1 1191 1048 L1193 1046" fill="none" stroke="#2b88d8" stroke-width="1.6"/>
</svg>
<div class="t" style="left:1291px;top:1033.1px;font-size:14.6px;color:#eaeaea;">9.525 cm = 30'-0"</div>
<div class="t" style="left:1422.5px;top:1033.1px;font-size:14.6px;color:#eaeaea;">106.68 x 76.20 cm</div>
<div class="t" style="left:1572.5px;top:1033.1px;font-size:14.6px;color:#eaeaea;">(11.96, 16.26)</div>

</body></html>
